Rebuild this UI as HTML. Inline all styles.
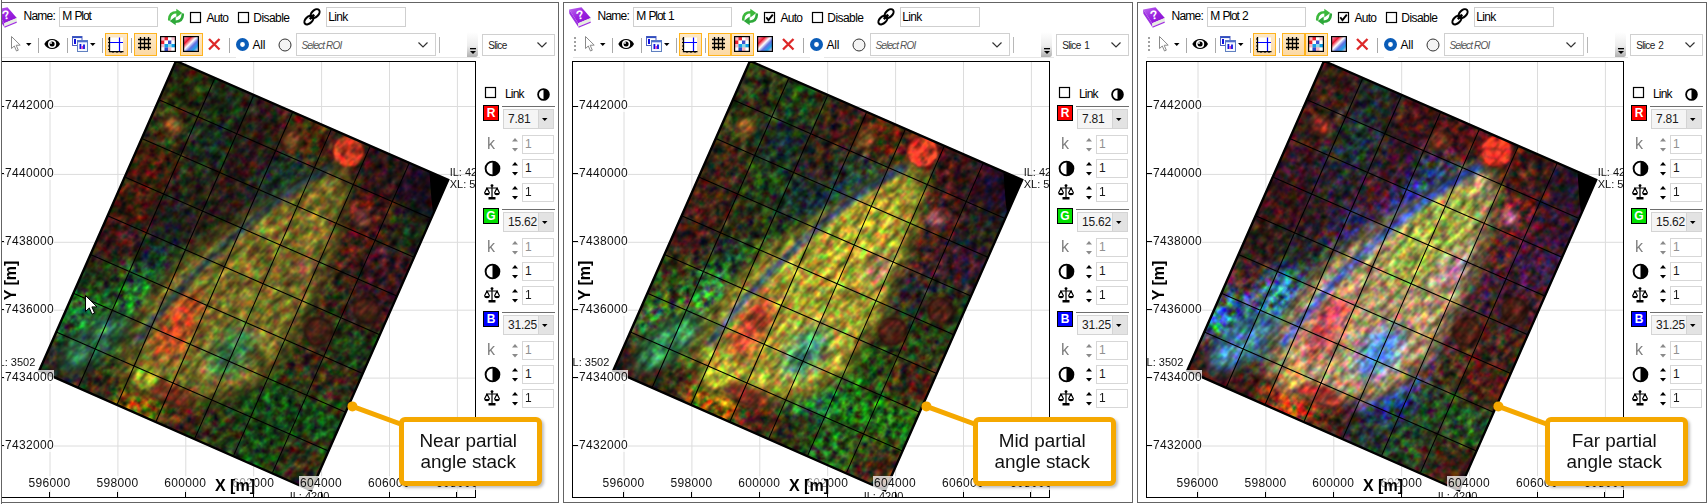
<!DOCTYPE html><html><head><meta charset="utf-8"><style>
html,body{margin:0;padding:0;background:#fff;}
body{width:1707px;height:504px;position:relative;overflow:hidden;font-family:"Liberation Sans", sans-serif;}
.t{position:absolute;white-space:nowrap;line-height:14px;font-family:"Liberation Sans", sans-serif;}
.b{position:absolute;}
.s{position:absolute;overflow:visible;}
.clip{position:absolute;overflow:hidden;}
.lab{font-size:12px;line-height:14px;color:#111;background:rgba(255,255,255,0.75);letter-spacing:0.33px;}
.pan{position:absolute;top:0;height:504px;overflow:hidden;}
</style></head><body>
<div class="pan" style="left:1px;width:562px;"><div class="b" style="left:0;top:0;width:1px;height:504px;background:#646464;z-index:5"></div><div class="b" style="left:-12px;top:0;width:570px;height:504px;"><div class="b" style="left:0px;top:2px;width:570px;height:501px;border:1px solid #646464;box-sizing:border-box;background:#fff;"></div><svg class="s" style="left:3px;top:4px;" width="26" height="26" viewBox="0 0 26 26"><defs><linearGradient id="bkg0" x1="0" y1="0" x2="1" y2="1"><stop offset="0" stop-color="#c070f0"/><stop offset="0.5" stop-color="#9a22e0"/><stop offset="1" stop-color="#8a10d0"/></linearGradient></defs>
<path d="M3.1 5.4 L15.5 3.3 L24.8 14 L12.2 19.2 Z" fill="url(#bkg0)"/>
<path d="M3.1 5.4 L12.2 19.2 L12.6 23.6 L3.4 9.8 Z" fill="#9c30e0"/>
<path d="M12.2 19.2 L24.8 14 L24.6 17.6 L12.6 22.4 Z" fill="#e6eee0"/>
<path d="M12.6 22.4 L24.6 17.6 L24.8 18.8 L12.6 23.8 Z" fill="#a030e0"/>
<text x="14" y="15.3" font-family="Liberation Sans" font-weight="bold" font-size="12.5" fill="#fff" text-anchor="middle" transform="rotate(-14 14 11)">?</text></svg><div class="t" style="left:34.5px;top:9px;font-size:12px;color:#000;letter-spacing:-0.75px;">Name:</div><div class="b" style="left:70px;top:7px;width:99px;height:20px;border:1px solid #cfcfcf;box-sizing:border-box;background:#fff;"></div><div class="t" style="left:73.3px;top:9px;font-size:12px;color:#000;letter-spacing:-1.1px;word-spacing:1px;">M Plot</div><svg class="s" style="left:178.5px;top:8.5px;" width="16" height="16" viewBox="0 0 16 16"><path d="M1.2 10.5 C1.4 5.5 4.5 3.2 9 3.3" fill="none" stroke="#3cb83c" stroke-width="2.6" stroke-linecap="round"/>
<path d="M8.3 -0.3 L14.3 4.1 L8.3 8.6 Z" fill="#3cb83c"/>
<path d="M14.8 5.6 C14.6 10.6 11.5 12.8 7 12.7" fill="none" stroke="#2ea83a" stroke-width="2.6" stroke-linecap="round"/>
<path d="M7.7 7.5 L1.7 11.9 L7.7 16.3 Z" fill="#2ea83a"/></svg><svg class="s" style="left:201px;top:12px;" width="11" height="11" viewBox="0 0 11 11"><rect x="0.5" y="0.5" width="10" height="10" fill="#fff" stroke="#000" stroke-width="1.2"/></svg><div class="t" style="left:217.5px;top:10.7px;font-size:12px;color:#000;letter-spacing:-0.75px;">Auto</div><svg class="s" style="left:248.5px;top:12px;" width="11" height="11" viewBox="0 0 11 11"><rect x="0.5" y="0.5" width="10" height="10" fill="#fff" stroke="#000" stroke-width="1.2"/></svg><div class="t" style="left:264.3px;top:10.7px;font-size:12px;color:#000;letter-spacing:-0.55px;">Disable</div><svg class="s" style="left:309px;top:4px;" width="30" height="26" viewBox="0 0 30 26"><g fill="none" stroke="#000" stroke-width="2.1">
<ellipse cx="10.9" cy="16" rx="5.4" ry="3.3" transform="rotate(-45 10.9 16)"/>
<ellipse cx="17.1" cy="9.7" rx="5.4" ry="3.3" transform="rotate(-45 17.1 9.7)"/>
<path d="M11.8 15.1 L16.2 10.6" stroke-width="2.4"/></g></svg><div class="b" style="left:337px;top:7px;width:80px;height:20px;border:1px solid #cfcfcf;box-sizing:border-box;background:#fff;"></div><div class="t" style="left:339.3px;top:9.5px;font-size:12px;color:#000;letter-spacing:-0.7px;">Link</div><div class="b" style="left:11px;top:36.5px;width:2px;height:2px;background:#a0a0a0;"></div><div class="b" style="left:11px;top:40.5px;width:2px;height:2px;background:#a0a0a0;"></div><div class="b" style="left:11px;top:44.5px;width:2px;height:2px;background:#a0a0a0;"></div><div class="b" style="left:11px;top:48.5px;width:2px;height:2px;background:#a0a0a0;"></div><svg class="s" style="left:21.5px;top:35.5px;" width="10" height="16" viewBox="0 0 10 16"><path d="M0.5 0.5 L0.5 12.5 L3.3 10 L5.5 15 L7.3 14.2 L5.2 9.3 L9.2 9.1 Z" fill="#fff" stroke="#8a8a8a" stroke-width="1"/></svg><svg class="s" style="left:36.5px;top:43px;" width="6" height="4" viewBox="0 0 6 4"><path d="M0 0 L5.5 0 L2.75 3 Z" fill="#000"/></svg><div class="b" style="left:49px;top:37.5px;width:1px;height:15px;background:#a8a8a8;"></div><div class="b" style="left:78px;top:37.5px;width:1px;height:15px;background:#a8a8a8;"></div><div class="b" style="left:113px;top:37.5px;width:1px;height:15px;background:#a8a8a8;"></div><div class="b" style="left:142px;top:37.5px;width:1px;height:15px;background:#a8a8a8;"></div><div class="b" style="left:240px;top:37.5px;width:1px;height:15px;background:#a8a8a8;"></div><svg class="s" style="left:54.5px;top:38px;" width="17" height="12" viewBox="0 0 17 12"><path d="M0.3 6 C3.5 -0.8 12.8 -0.8 16 6 C12.8 12.8 3.5 12.8 0.3 6 Z" fill="#000"/>
<circle cx="8.1" cy="6" r="4.1" fill="#fff"/><circle cx="8.1" cy="6" r="2.5" fill="#000"/><circle cx="7" cy="5" r="0.9" fill="#fff"/></svg><svg class="s" style="left:82.5px;top:36px;" width="16" height="16" viewBox="0 0 16 16"><rect x="0.5" y="0.5" width="9.5" height="9" fill="#fff" stroke="#5060c0"/>
<rect x="0.5" y="0.5" width="9.5" height="1.6" fill="#3050c0"/>
<rect x="2" y="3" width="2" height="5" fill="#1010e0"/>
<rect x="5.5" y="4.5" width="10" height="11" fill="#f4f8ff" stroke="#6080c0"/>
<rect x="5.5" y="4.5" width="10" height="1.8" fill="#5070d0"/>
<rect x="7.5" y="8" width="1.8" height="5" fill="#1010e0"/><rect x="9.3" y="10" width="1.8" height="3" fill="#e040c0"/><rect x="11.1" y="8.5" width="1.8" height="4.5" fill="#1010e0"/></svg><svg class="s" style="left:101px;top:43px;" width="6" height="4" viewBox="0 0 6 4"><path d="M0 0 L5.5 0 L2.75 3 Z" fill="#000"/></svg><div class="b" style="left:116px;top:33px;width:23px;height:23px;background:linear-gradient(#fde9c8,#fcd9a4);border:1px solid #ffb41e;box-sizing:border-box;"></div><div class="b" style="left:145px;top:33px;width:23px;height:23px;background:linear-gradient(#fde9c8,#fcd9a4);border:1px solid #ffb41e;box-sizing:border-box;"></div><div class="b" style="left:191px;top:33px;width:23px;height:23px;background:linear-gradient(#fde9c8,#fcd9a4);border:1px solid #ffb41e;box-sizing:border-box;"></div><svg class="s" style="left:119px;top:36.5px;" width="16" height="16" viewBox="0 0 16 16"><rect x="1.5" y="0.5" width="13.5" height="14" fill="#fff"/>
<path d="M1.5 0 L1.5 14.7 L15.5 14.7" fill="none" stroke="#000" stroke-width="1.3"/>
<path d="M0 2 h1.5 M0 5.5 h1.5 M0 9 h1.5 M0 12.5 h1.5 M5 14.7 v1.3 M9 14.7 v1.3 M13 14.7 v1.3" stroke="#000" stroke-width="1"/>
<path d="M11.5 0.5 V14 M2 5.5 H15" stroke="#0000ff" stroke-width="1.2"/></svg><svg class="s" style="left:149px;top:37px;" width="13" height="13" viewBox="0 0 13 13"><path d="M2.5 0 V13 M6.5 0 V13 M10.5 0 V13 M0 2.5 H13 M0 6.5 H13 M0 10.5 H13" stroke="#000" stroke-width="1.3"/></svg><svg class="s" style="left:171px;top:36px;" width="16" height="16" viewBox="0 0 16 16"><rect x="1.0" y="1.0" width="3.6" height="3.6" fill="#f8b8c8"/><rect x="4.5" y="1.0" width="3.6" height="3.6" fill="#e82030"/><rect x="8.0" y="1.0" width="3.6" height="3.6" fill="#ffffff"/><rect x="11.5" y="1.0" width="3.6" height="3.6" fill="#f8c0d0"/><rect x="1.0" y="4.5" width="3.6" height="3.6" fill="#e82030"/><rect x="4.5" y="4.5" width="3.6" height="3.6" fill="#ffffff"/><rect x="8.0" y="4.5" width="3.6" height="3.6" fill="#4050d0"/><rect x="11.5" y="4.5" width="3.6" height="3.6" fill="#ffffff"/><rect x="1.0" y="8.0" width="3.6" height="3.6" fill="#f8b8c8"/><rect x="4.5" y="8.0" width="3.6" height="3.6" fill="#10a0e8"/><rect x="8.0" y="8.0" width="3.6" height="3.6" fill="#90d8e8"/><rect x="11.5" y="8.0" width="3.6" height="3.6" fill="#10a0e8"/><rect x="1.0" y="11.5" width="3.6" height="3.6" fill="#ffffff"/><rect x="4.5" y="11.5" width="3.6" height="3.6" fill="#3048c8"/><rect x="8.0" y="11.5" width="3.6" height="3.6" fill="#f8b8c8"/><rect x="11.5" y="11.5" width="3.6" height="3.6" fill="#ffffff"/><rect x="0.6" y="0.6" width="14.8" height="14.8" fill="none" stroke="#000" stroke-width="1.2"/></svg><svg class="s" style="left:194px;top:36px;" width="16" height="16" viewBox="0 0 16 16"><defs><linearGradient id="gi0" x1="0" y1="0" x2="1" y2="1">
<stop offset="0" stop-color="#ff9cc0"/><stop offset="0.25" stop-color="#e81830"/><stop offset="0.45" stop-color="#ffffff"/><stop offset="0.62" stop-color="#6070e0"/><stop offset="0.8" stop-color="#20a0e8"/><stop offset="1" stop-color="#ffd0e0"/></linearGradient></defs>
<rect x="1" y="1" width="14" height="14" fill="url(#gi0)"/>
<rect x="0.6" y="0.6" width="14.8" height="14.8" fill="none" stroke="#000" stroke-width="1.2"/></svg><svg class="s" style="left:218.5px;top:37.5px;" width="13" height="13" viewBox="0 0 13 13"><path d="M1 1 L11.5 11.5 M11.5 1 L1 11.5" stroke="#dd2828" stroke-width="2.3"/></svg><svg class="s" style="left:246.5px;top:37.5px;" width="13" height="13" viewBox="0 0 13 13"><circle cx="6.5" cy="6.5" r="4.45" fill="#fff" stroke="#0a5cb8" stroke-width="4.1"/></svg><div class="t" style="left:263.5px;top:38px;font-size:12px;color:#000;letter-spacing:-0.2px;">All</div><svg class="s" style="left:288.5px;top:37.5px;" width="14" height="14" viewBox="0 0 14 14"><circle cx="7" cy="7" r="6" fill="#f4f4f4" stroke="#333" stroke-width="1"/></svg><div class="b" style="left:307px;top:33px;width:140px;height:23px;border:1px solid #d0d0d0;box-sizing:border-box;background:#fff;"></div><div class="t" style="left:312.5px;top:38.5px;font-size:10px;color:#555;font-style:italic;letter-spacing:-0.85px;">Select ROI</div><svg class="s" style="left:429px;top:41.5px;" width="10" height="6" viewBox="0 0 10 6"><path d="M0.5 0.5 L5 5 L9.5 0.5" fill="none" stroke="#333" stroke-width="1.2"/></svg><div class="b" style="left:450px;top:37px;width:1px;height:16px;background:#b8b8b8;"></div><svg class="s" style="left:477.5px;top:32px;" width="11" height="25" viewBox="0 0 11 25"><defs><linearGradient id="ovg0" x1="0" y1="0" x2="0" y2="1"><stop offset="0" stop-color="#ffffff"/><stop offset="0.55" stop-color="#ededed"/><stop offset="1" stop-color="#b0b0b0"/></linearGradient></defs>
<path d="M0 0 H7 Q11 0 11 4 V22 Q11 25 8.5 25 H0 Z" fill="url(#ovg0)"/>
<rect x="3" y="16" width="6" height="1.3" fill="#000"/><path d="M3 19 H9 L6 22 Z" fill="#000"/></svg><div class="b" style="left:493px;top:33.5px;width:73px;height:22.5px;border:1px solid #d0d0d0;box-sizing:border-box;background:#fff;"></div><div class="t" style="left:499.2px;top:38.5px;font-size:10px;color:#222;letter-spacing:-0.65px;word-spacing:1.5px;">Slice</div><svg class="s" style="left:548px;top:41.5px;" width="10" height="6" viewBox="0 0 10 6"><path d="M0.5 0.5 L5 5 L9.5 0.5" fill="none" stroke="#333" stroke-width="1.2"/></svg><div class="b" style="left:10px;top:57px;width:237px;height:1px;background:#e6e6e6;"></div><div class="b" style="left:261px;top:57px;width:230px;height:1px;background:#e6e6e6;"></div><svg class="s" style="left:9.5px;top:61.5px;overflow:hidden;" width="477.0" height="436.0" viewBox="0 0 477.0 436.0"><line x1="51.0" y1="0" x2="51.0" y2="436.0" stroke="#dcdcdc" stroke-width="1"/><line x1="118.89999999999998" y1="0" x2="118.89999999999998" y2="436.0" stroke="#dcdcdc" stroke-width="1"/><line x1="186.79999999999995" y1="0" x2="186.79999999999995" y2="436.0" stroke="#dcdcdc" stroke-width="1"/><line x1="254.70000000000005" y1="0" x2="254.70000000000005" y2="436.0" stroke="#dcdcdc" stroke-width="1"/><line x1="322.6" y1="0" x2="322.6" y2="436.0" stroke="#dcdcdc" stroke-width="1"/><line x1="390.5" y1="0" x2="390.5" y2="436.0" stroke="#dcdcdc" stroke-width="1"/><line x1="458.4000000000001" y1="0" x2="458.4000000000001" y2="436.0" stroke="#dcdcdc" stroke-width="1"/><line x1="0" y1="44.5" x2="477.0" y2="44.5" stroke="#dcdcdc" stroke-width="1"/><line x1="0" y1="112.4" x2="477.0" y2="112.4" stroke="#dcdcdc" stroke-width="1"/><line x1="0" y1="180.3" x2="477.0" y2="180.3" stroke="#dcdcdc" stroke-width="1"/><line x1="0" y1="248.20000000000005" x2="477.0" y2="248.20000000000005" stroke="#dcdcdc" stroke-width="1"/><line x1="0" y1="316.1" x2="477.0" y2="316.1" stroke="#dcdcdc" stroke-width="1"/><line x1="0" y1="384.0" x2="477.0" y2="384.0" stroke="#dcdcdc" stroke-width="1"/><g transform="translate(-572.5,-61.5)"><defs><clipPath id="cp0"><polygon points="749.5,60.5 1021.7,179.4 884.6,490.0 612.7,370.2"/></clipPath><filter id="bl0" x="500" y="0" width="600" height="560" filterUnits="userSpaceOnUse"><feGaussianBlur stdDeviation="10"/></filter><filter id="fb0" x="500" y="0" width="600" height="560" filterUnits="userSpaceOnUse"><feGaussianBlur stdDeviation="6.5"/></filter><filter id="fs0" x="500" y="0" width="600" height="560" filterUnits="userSpaceOnUse"><feGaussianBlur stdDeviation="2.5"/></filter><filter id="fr0" x="500" y="0" width="600" height="560" filterUnits="userSpaceOnUse"><feGaussianBlur stdDeviation="1.2"/></filter><filter id="tx0" x="490" y="-50" width="660" height="660" filterUnits="userSpaceOnUse" color-interpolation-filters="sRGB"><feTurbulence type="fractalNoise" baseFrequency="0.05 0.16" numOctaves="2" seed="3" result="n"/><feColorMatrix in="n" type="matrix" values="1 0 0 0 0  1 0 0 0 0  1 0 0 0 0  0 0 0 0 1" result="nl"/><feComposite in="SourceGraphic" in2="nl" operator="arithmetic" k1="1.35" k2="0.32499999999999996" k3="0" k4="0"/></filter><filter id="tc0" x="500" y="0" width="600" height="560" filterUnits="userSpaceOnUse" color-interpolation-filters="sRGB"><feTurbulence type="fractalNoise" baseFrequency="0.13" numOctaves="3" seed="11" result="m"/><feColorMatrix in="m" type="matrix" values="1 0 0 0 0  0 1 0 0 0  0 0 1 0 0  0 0 0 0 1" result="mc"/><feComposite in="SourceGraphic" in2="mc" operator="arithmetic" k1="3.0" k2="-0.5" k3="0" k4="0"/></filter><filter id="tw0" x="500" y="0" width="600" height="560" filterUnits="userSpaceOnUse" color-interpolation-filters="sRGB"><feTurbulence type="fractalNoise" baseFrequency="0.15" numOctaves="2" seed="5" result="m"/><feColorMatrix in="m" type="matrix" values="1 0 0 0 0  0 1 0 0 0  0 0 1 0 0  0 0 0 0 1" result="mc"/><feComposite in="SourceGraphic" in2="mc" operator="arithmetic" k1="1.3" k2="0.35" k3="0" k4="0"/></filter></defs><g clip-path="url(#cp0)"><g transform="rotate(-47 820 280)"><g filter="url(#tx0)"><g transform="rotate(47 820 280)"><g filter="url(#tc0)"><g filter="url(#bl0)"><polygon points="727.7,4.8 766.6,21.8 749.5,60.5 710.6,43.5" fill="rgb(37, 43, 15)" stroke="rgb(37, 43, 15)" stroke-width="1"/><polygon points="766.6,21.8 805.5,38.8 788.4,77.5 749.5,60.5" fill="rgb(37, 43, 15)" stroke="rgb(37, 43, 15)" stroke-width="1"/><polygon points="805.5,38.8 844.4,55.8 827.3,94.5 788.4,77.5" fill="rgb(31, 43, 20)" stroke="rgb(31, 43, 20)" stroke-width="1"/><polygon points="844.4,55.8 883.3,72.7 866.2,111.5 827.3,94.5" fill="rgb(44, 26, 21)" stroke="rgb(44, 26, 21)" stroke-width="1"/><polygon points="883.3,72.7 922.1,89.7 905.0,128.4 866.2,111.5" fill="rgb(67, 41, 14)" stroke="rgb(67, 41, 14)" stroke-width="1"/><polygon points="922.1,89.7 961.0,106.7 943.9,145.4 905.0,128.4" fill="rgb(61, 30, 19)" stroke="rgb(61, 30, 19)" stroke-width="1"/><polygon points="961.0,106.7 999.9,123.7 982.8,162.4 943.9,145.4" fill="rgb(44, 21, 21)" stroke="rgb(44, 21, 21)" stroke-width="1"/><polygon points="999.9,123.7 1038.8,140.7 1021.7,179.4 982.8,162.4" fill="rgb(28, 17, 28)" stroke="rgb(28, 17, 28)" stroke-width="1"/><polygon points="1038.8,140.7 1077.7,157.7 1060.6,196.4 1021.7,179.4" fill="rgb(28, 17, 28)" stroke="rgb(28, 17, 28)" stroke-width="1"/><polygon points="710.6,43.5 749.5,60.5 732.4,99.2 693.5,82.2" fill="rgb(37, 43, 15)" stroke="rgb(37, 43, 15)" stroke-width="1"/><polygon points="749.5,60.5 788.4,77.5 771.3,116.2 732.4,99.2" fill="rgb(37, 43, 15)" stroke="rgb(37, 43, 15)" stroke-width="1"/><polygon points="788.4,77.5 827.3,94.5 810.2,133.2 771.3,116.2" fill="rgb(31, 43, 20)" stroke="rgb(31, 43, 20)" stroke-width="1"/><polygon points="827.3,94.5 866.2,111.5 849.1,150.2 810.2,133.2" fill="rgb(44, 26, 21)" stroke="rgb(44, 26, 21)" stroke-width="1"/><polygon points="866.2,111.5 905.0,128.4 887.9,167.2 849.1,150.2" fill="rgb(67, 41, 14)" stroke="rgb(67, 41, 14)" stroke-width="1"/><polygon points="905.0,128.4 943.9,145.4 926.8,184.1 887.9,167.2" fill="rgb(61, 30, 19)" stroke="rgb(61, 30, 19)" stroke-width="1"/><polygon points="943.9,145.4 982.8,162.4 965.7,201.1 926.8,184.1" fill="rgb(44, 21, 21)" stroke="rgb(44, 21, 21)" stroke-width="1"/><polygon points="982.8,162.4 1021.7,179.4 1004.6,218.1 965.7,201.1" fill="rgb(28, 17, 28)" stroke="rgb(28, 17, 28)" stroke-width="1"/><polygon points="1021.7,179.4 1060.6,196.4 1043.5,235.1 1004.6,218.1" fill="rgb(28, 17, 28)" stroke="rgb(28, 17, 28)" stroke-width="1"/><polygon points="693.5,82.2 732.4,99.2 715.3,137.9 676.4,120.9" fill="rgb(53, 53, 18)" stroke="rgb(53, 53, 18)" stroke-width="1"/><polygon points="732.4,99.2 771.3,116.2 754.2,154.9 715.3,137.9" fill="rgb(53, 53, 18)" stroke="rgb(53, 53, 18)" stroke-width="1"/><polygon points="771.3,116.2 810.2,133.2 793.1,171.9 754.2,154.9" fill="rgb(20, 43, 31)" stroke="rgb(20, 43, 31)" stroke-width="1"/><polygon points="810.2,133.2 849.1,150.2 832.0,188.9 793.1,171.9" fill="rgb(44, 21, 21)" stroke="rgb(44, 21, 21)" stroke-width="1"/><polygon points="849.1,150.2 887.9,167.2 870.8,205.9 832.0,188.9" fill="rgb(19, 54, 41)" stroke="rgb(19, 54, 41)" stroke-width="1"/><polygon points="887.9,167.2 926.8,184.1 909.7,222.9 870.8,205.9" fill="rgb(40, 67, 18)" stroke="rgb(40, 67, 18)" stroke-width="1"/><polygon points="926.8,184.1 965.7,201.1 948.6,239.8 909.7,222.9" fill="rgb(83, 19, 19)" stroke="rgb(83, 19, 19)" stroke-width="1"/><polygon points="965.7,201.1 1004.6,218.1 987.5,256.8 948.6,239.8" fill="rgb(31, 37, 21)" stroke="rgb(31, 37, 21)" stroke-width="1"/><polygon points="1004.6,218.1 1043.5,235.1 1026.4,273.8 987.5,256.8" fill="rgb(31, 37, 21)" stroke="rgb(31, 37, 21)" stroke-width="1"/><polygon points="676.4,120.9 715.3,137.9 698.2,176.6 659.3,159.7" fill="rgb(69, 30, 14)" stroke="rgb(69, 30, 14)" stroke-width="1"/><polygon points="715.3,137.9 754.2,154.9 737.1,193.6 698.2,176.6" fill="rgb(69, 30, 14)" stroke="rgb(69, 30, 14)" stroke-width="1"/><polygon points="754.2,154.9 793.1,171.9 776.0,210.6 737.1,193.6" fill="rgb(37, 37, 20)" stroke="rgb(37, 37, 20)" stroke-width="1"/><polygon points="793.1,171.9 832.0,188.9 814.9,227.6 776.0,210.6" fill="rgb(44, 26, 21)" stroke="rgb(44, 26, 21)" stroke-width="1"/><polygon points="832.0,188.9 870.8,205.9 853.7,244.6 814.9,227.6" fill="rgb(18, 53, 53)" stroke="rgb(18, 53, 53)" stroke-width="1"/><polygon points="870.8,205.9 909.7,222.9 892.6,261.6 853.7,244.6" fill="rgb(89, 104, 13)" stroke="rgb(89, 104, 13)" stroke-width="1"/><polygon points="909.7,222.9 948.6,239.8 931.5,278.6 892.6,261.6" fill="rgb(68, 29, 19)" stroke="rgb(68, 29, 19)" stroke-width="1"/><polygon points="948.6,239.8 987.5,256.8 970.4,295.5 931.5,278.6" fill="rgb(55, 19, 30)" stroke="rgb(55, 19, 30)" stroke-width="1"/><polygon points="987.5,256.8 1026.4,273.8 1009.3,312.5 970.4,295.5" fill="rgb(55, 19, 30)" stroke="rgb(55, 19, 30)" stroke-width="1"/><polygon points="659.3,159.7 698.2,176.6 681.1,215.3 642.2,198.4" fill="rgb(62, 30, 15)" stroke="rgb(62, 30, 15)" stroke-width="1"/><polygon points="698.2,176.6 737.1,193.6 720.0,232.3 681.1,215.3" fill="rgb(62, 30, 15)" stroke="rgb(62, 30, 15)" stroke-width="1"/><polygon points="737.1,193.6 776.0,210.6 758.9,249.3 720.0,232.3" fill="rgb(31, 31, 31)" stroke="rgb(31, 31, 31)" stroke-width="1"/><polygon points="776.0,210.6 814.9,227.6 797.8,266.3 758.9,249.3" fill="rgb(43, 36, 20)" stroke="rgb(43, 36, 20)" stroke-width="1"/><polygon points="814.9,227.6 853.7,244.6 836.6,283.3 797.8,266.3" fill="rgb(103, 111, 12)" stroke="rgb(103, 111, 12)" stroke-width="1"/><polygon points="853.7,244.6 892.6,261.6 875.5,300.3 836.6,283.3" fill="rgb(103, 103, 12)" stroke="rgb(103, 103, 12)" stroke-width="1"/><polygon points="892.6,261.6 931.5,278.6 914.4,317.3 875.5,300.3" fill="rgb(48, 42, 19)" stroke="rgb(48, 42, 19)" stroke-width="1"/><polygon points="931.5,278.6 970.4,295.5 953.3,334.2 914.4,317.3" fill="rgb(55, 24, 30)" stroke="rgb(55, 24, 30)" stroke-width="1"/><polygon points="970.4,295.5 1009.3,312.5 992.2,351.2 953.3,334.2" fill="rgb(55, 24, 30)" stroke="rgb(55, 24, 30)" stroke-width="1"/><polygon points="642.2,198.4 681.1,215.3 664.0,254.1 625.1,237.1" fill="rgb(56, 25, 20)" stroke="rgb(56, 25, 20)" stroke-width="1"/><polygon points="681.1,215.3 720.0,232.3 702.9,271.0 664.0,254.1" fill="rgb(56, 25, 20)" stroke="rgb(56, 25, 20)" stroke-width="1"/><polygon points="720.0,232.3 758.9,249.3 741.8,288.0 702.9,271.0" fill="rgb(19, 54, 41)" stroke="rgb(19, 54, 41)" stroke-width="1"/><polygon points="758.9,249.3 797.8,266.3 780.7,305.0 741.8,288.0" fill="rgb(76, 91, 14)" stroke="rgb(76, 91, 14)" stroke-width="1"/><polygon points="797.8,266.3 836.6,283.3 819.5,322.0 780.7,305.0" fill="rgb(118, 102, 11)" stroke="rgb(118, 102, 11)" stroke-width="1"/><polygon points="836.6,283.3 875.5,300.3 858.4,339.0 819.5,322.0" fill="rgb(91, 76, 14)" stroke="rgb(91, 76, 14)" stroke-width="1"/><polygon points="875.5,300.3 914.4,317.3 897.3,356.0 858.4,339.0" fill="rgb(54, 47, 18)" stroke="rgb(54, 47, 18)" stroke-width="1"/><polygon points="914.4,317.3 953.3,334.2 936.2,373.0 897.3,356.0" fill="rgb(30, 55, 19)" stroke="rgb(30, 55, 19)" stroke-width="1"/><polygon points="953.3,334.2 992.2,351.2 975.1,389.9 936.2,373.0" fill="rgb(30, 55, 19)" stroke="rgb(30, 55, 19)" stroke-width="1"/><polygon points="625.1,237.1 664.0,254.1 646.9,292.8 608.0,275.8" fill="rgb(35, 54, 21)" stroke="rgb(35, 54, 21)" stroke-width="1"/><polygon points="664.0,254.1 702.9,271.0 685.8,309.8 646.9,292.8" fill="rgb(35, 54, 21)" stroke="rgb(35, 54, 21)" stroke-width="1"/><polygon points="702.9,271.0 741.8,288.0 724.7,326.7 685.8,309.8" fill="rgb(34, 121, 46)" stroke="rgb(34, 121, 46)" stroke-width="1"/><polygon points="741.8,288.0 780.7,305.0 763.6,343.7 724.7,326.7" fill="rgb(139, 53, 13)" stroke="rgb(139, 53, 13)" stroke-width="1"/><polygon points="780.7,305.0 819.5,322.0 802.4,360.7 763.6,343.7" fill="rgb(129, 73, 12)" stroke="rgb(129, 73, 12)" stroke-width="1"/><polygon points="819.5,322.0 858.4,339.0 841.3,377.7 802.4,360.7" fill="rgb(60, 122, 18)" stroke="rgb(60, 122, 18)" stroke-width="1"/><polygon points="858.4,339.0 897.3,356.0 880.2,394.7 841.3,377.7" fill="rgb(54, 41, 19)" stroke="rgb(54, 41, 19)" stroke-width="1"/><polygon points="897.3,356.0 936.2,373.0 919.1,411.7 880.2,394.7" fill="rgb(54, 41, 19)" stroke="rgb(54, 41, 19)" stroke-width="1"/><polygon points="936.2,373.0 975.1,389.9 958.0,428.7 919.1,411.7" fill="rgb(54, 41, 19)" stroke="rgb(54, 41, 19)" stroke-width="1"/><polygon points="608.0,275.8 646.9,292.8 629.8,331.5 590.9,314.5" fill="rgb(34, 113, 47)" stroke="rgb(34, 113, 47)" stroke-width="1"/><polygon points="646.9,292.8 685.8,309.8 668.7,348.5 629.8,331.5" fill="rgb(34, 113, 47)" stroke="rgb(34, 113, 47)" stroke-width="1"/><polygon points="685.8,309.8 724.7,326.7 707.6,365.5 668.7,348.5" fill="rgb(58, 120, 33)" stroke="rgb(58, 120, 33)" stroke-width="1"/><polygon points="724.7,326.7 763.6,343.7 746.5,382.4 707.6,365.5" fill="rgb(167, 98, 9)" stroke="rgb(167, 98, 9)" stroke-width="1"/><polygon points="763.6,343.7 802.4,360.7 785.3,399.4 746.5,382.4" fill="rgb(70, 152, 20)" stroke="rgb(70, 152, 20)" stroke-width="1"/><polygon points="802.4,360.7 841.3,377.7 824.2,416.4 785.3,399.4" fill="rgb(24, 69, 19)" stroke="rgb(24, 69, 19)" stroke-width="1"/><polygon points="841.3,377.7 880.2,394.7 863.1,433.4 824.2,416.4" fill="rgb(24, 69, 19)" stroke="rgb(24, 69, 19)" stroke-width="1"/><polygon points="880.2,394.7 919.1,411.7 902.0,450.4 863.1,433.4" fill="rgb(24, 69, 19)" stroke="rgb(24, 69, 19)" stroke-width="1"/><polygon points="919.1,411.7 958.0,428.7 940.9,467.4 902.0,450.4" fill="rgb(24, 69, 19)" stroke="rgb(24, 69, 19)" stroke-width="1"/><polygon points="590.9,314.5 629.8,331.5 612.7,370.2 573.8,353.2" fill="rgb(42, 36, 30)" stroke="rgb(42, 36, 30)" stroke-width="1"/><polygon points="629.8,331.5 668.7,348.5 651.6,387.2 612.7,370.2" fill="rgb(42, 36, 30)" stroke="rgb(42, 36, 30)" stroke-width="1"/><polygon points="668.7,348.5 707.6,365.5 690.5,404.2 651.6,387.2" fill="rgb(48, 42, 19)" stroke="rgb(48, 42, 19)" stroke-width="1"/><polygon points="707.6,365.5 746.5,382.4 729.4,421.2 690.5,404.2" fill="rgb(126, 101, 11)" stroke="rgb(126, 101, 11)" stroke-width="1"/><polygon points="746.5,382.4 785.3,399.4 768.2,438.1 729.4,421.2" fill="rgb(67, 40, 18)" stroke="rgb(67, 40, 18)" stroke-width="1"/><polygon points="785.3,399.4 824.2,416.4 807.1,455.1 768.2,438.1" fill="rgb(42, 48, 19)" stroke="rgb(42, 48, 19)" stroke-width="1"/><polygon points="824.2,416.4 863.1,433.4 846.0,472.1 807.1,455.1" fill="rgb(24, 69, 19)" stroke="rgb(24, 69, 19)" stroke-width="1"/><polygon points="863.1,433.4 902.0,450.4 884.9,489.1 846.0,472.1" fill="rgb(54, 41, 19)" stroke="rgb(54, 41, 19)" stroke-width="1"/><polygon points="902.0,450.4 940.9,467.4 923.8,506.1 884.9,489.1" fill="rgb(54, 41, 19)" stroke="rgb(54, 41, 19)" stroke-width="1"/><polygon points="573.8,353.2 612.7,370.2 595.6,408.9 556.7,391.9" fill="rgb(42, 36, 30)" stroke="rgb(42, 36, 30)" stroke-width="1"/><polygon points="612.7,370.2 651.6,387.2 634.5,425.9 595.6,408.9" fill="rgb(42, 36, 30)" stroke="rgb(42, 36, 30)" stroke-width="1"/><polygon points="651.6,387.2 690.5,404.2 673.4,442.9 634.5,425.9" fill="rgb(48, 42, 19)" stroke="rgb(48, 42, 19)" stroke-width="1"/><polygon points="690.5,404.2 729.4,421.2 712.3,459.9 673.4,442.9" fill="rgb(126, 101, 11)" stroke="rgb(126, 101, 11)" stroke-width="1"/><polygon points="729.4,421.2 768.2,438.1 751.1,476.9 712.3,459.9" fill="rgb(67, 40, 18)" stroke="rgb(67, 40, 18)" stroke-width="1"/><polygon points="768.2,438.1 807.1,455.1 790.0,493.8 751.1,476.9" fill="rgb(42, 48, 19)" stroke="rgb(42, 48, 19)" stroke-width="1"/><polygon points="807.1,455.1 846.0,472.1 828.9,510.8 790.0,493.8" fill="rgb(24, 69, 19)" stroke="rgb(24, 69, 19)" stroke-width="1"/><polygon points="846.0,472.1 884.9,489.1 867.8,527.8 828.9,510.8" fill="rgb(54, 41, 19)" stroke="rgb(54, 41, 19)" stroke-width="1"/><polygon points="884.9,489.1 923.8,506.1 906.7,544.8 867.8,527.8" fill="rgb(54, 41, 19)" stroke="rgb(54, 41, 19)" stroke-width="1"/></g></g><g filter="url(#tw0)"><g filter="url(#fb0)"><path d="M909.1 162.9 C924.0 168.6 922.8 197.2 914.5 222.8 C903.8 264.5 874.7 339.8 838.4 376.8 C820.5 390.7 804.3 400.4 775.9 399.9 L710.2 391.4 C692.1 380.7 691.1 347.0 704.5 332.5 C712.6 309.8 729.9 277.8 777.9 243.2 C805.9 224.7 844.4 196.1 909.1 164.9 Z" fill="rgb(118, 108, 40)"/><ellipse cx="858" cy="238" rx="62" ry="28" transform="rotate(-47 858 238)" fill="rgb(122, 108, 38)"/><ellipse cx="752" cy="325" rx="38" ry="15" transform="rotate(-60 752 325)" fill="rgb(190, 70, 35)"/><ellipse cx="805" cy="352" rx="30" ry="17" transform="rotate(-50 805 352)" fill="rgb(55, 125, 70)"/><ellipse cx="668" cy="342" rx="40" ry="15" transform="rotate(-40 668 342)" fill="rgb(55, 125, 85)"/><ellipse cx="878" cy="268" rx="18" ry="10" transform="rotate(-50 878 268)" fill="rgb(120, 80, 50)"/></g><g filter="url(#fs0)"><path d="M708 345 Q760 272 842 207 Q880 178 906 166" fill="none" stroke="rgb(35, 60, 80)" stroke-width="6"/><ellipse cx="745" cy="394" rx="24" ry="9" transform="rotate(20 745 394)" fill="rgb(120, 50, 30)"/><circle cx="718" cy="376" r="12" fill="rgb(160, 170, 40)"/><circle cx="935" cy="218" r="8" fill="rgb(140, 70, 60)"/><circle cx="865" cy="139" r="10" fill="rgb(120, 70, 35)"/><circle cx="746" cy="125" r="9" fill="rgb(150, 90, 40)"/><circle cx="892" cy="331" r="14" fill="rgb(70, 35, 25)"/><circle cx="940" cy="310" r="13" fill="rgb(70, 35, 25)"/></g><g filter="url(#fr0)"><circle cx="922" cy="151" r="15.5" fill="rgb(200, 60, 35)"/></g></g></g></g></g></g><path d="M788.4 77.5L651.6 387.2M827.3 94.5L690.5 404.2M866.2 111.5L729.4 421.2M905.0 128.4L768.2 438.1M943.9 145.4L807.1 455.1M982.8 162.4L846.0 472.1M732.4 99.2L1004.6 218.1M715.3 137.9L987.5 256.8M698.2 176.6L970.4 295.5M681.1 215.3L953.3 334.2M664.0 254.1L936.2 373.0M646.9 292.8L919.1 411.7M629.8 331.5L902.0 450.4" stroke="#000" stroke-width="1.1" fill="none"/><polygon points="1003,172.5 1021.7,179.4 1006.5,212 1005,200" fill="#000"/><polygon points="749.5,60.5 1021.7,179.4 884.6,490.0 612.7,370.2" fill="none" stroke="#000" stroke-width="2.4"/></g></svg><div class="clip" style="left:9.5px;top:61.5px;width:477.0px;height:436.0px;"><div class="t" style="left:451.20000000000005px;top:104.5px;font-size:11px;line-height:12px;color:#111;">IL: 4200<br>XL: 5502</div><div class="t" style="left:-7.2000000000000455px;top:294.5px;font-size:11px;line-height:12px;color:#111;width:44px;text-align:right;">IL: 3502</div><div class="t" style="left:291.20000000000005px;top:428.5px;font-size:11px;line-height:12px;color:#111;">IL: 4200</div></div><div class="b" style="left:9px;top:61px;width:1px;height:437px;background:#000;"></div><div class="b" style="left:9px;top:61px;width:478px;height:1.3px;background:#000;"></div><div class="b" style="left:486px;top:61px;width:1.2px;height:437px;background:#000;"></div><div class="b" style="left:9px;top:497px;width:478px;height:1.2px;background:#000;"></div><div class="b" style="left:9.5px;top:105.5px;width:5px;height:1px;background:#000;"></div><div class="b" style="left:9.5px;top:173.4px;width:5px;height:1px;background:#000;"></div><div class="b" style="left:9.5px;top:241.3px;width:5px;height:1px;background:#000;"></div><div class="b" style="left:9.5px;top:309.20000000000005px;width:5px;height:1px;background:#000;"></div><div class="b" style="left:9.5px;top:377.1px;width:5px;height:1px;background:#000;"></div><div class="b" style="left:9.5px;top:445.0px;width:5px;height:1px;background:#000;"></div><div class="b" style="left:60.0px;top:492px;width:1px;height:5px;background:#000;"></div><div class="b" style="left:127.9px;top:492px;width:1px;height:5px;background:#000;"></div><div class="b" style="left:195.8px;top:492px;width:1px;height:5px;background:#000;"></div><div class="b" style="left:263.7px;top:492px;width:1px;height:5px;background:#000;"></div><div class="b" style="left:331.6px;top:492px;width:1px;height:5px;background:#000;"></div><div class="b" style="left:399.5px;top:492px;width:1px;height:5px;background:#000;"></div><div class="b" style="left:467.4px;top:492px;width:1px;height:5px;background:#000;"></div><div class="t lab" style="left:16px;top:98.0px;">7442000</div><div class="t lab" style="left:16px;top:165.9px;">7440000</div><div class="t lab" style="left:16px;top:233.8px;">7438000</div><div class="t lab" style="left:16px;top:301.70000000000005px;">7436000</div><div class="t lab" style="left:16px;top:369.6px;">7434000</div><div class="t lab" style="left:16px;top:437.5px;">7432000</div><div class="t lab" style="left:38.5px;top:476px;width:44px;text-align:center;">596000</div><div class="t lab" style="left:106.4px;top:476px;width:44px;text-align:center;">598000</div><div class="t lab" style="left:174.3px;top:476px;width:44px;text-align:center;">600000</div><div class="t lab" style="left:242.2px;top:476px;width:44px;text-align:center;">602000</div><div class="t lab" style="left:310.1px;top:476px;width:44px;text-align:center;">604000</div><div class="t lab" style="left:378.0px;top:476px;width:44px;text-align:center;">606000</div><div class="t lab" style="left:445.9px;top:476px;width:44px;text-align:center;">608000</div><div class="t" style="left:226px;top:477px;font-size:16px;font-weight:bold;color:#000;background:rgba(255,255,255,0.55);line-height:17px;">X [m]</div><div class="t" style="left:0.5px;top:271.5px;font-size:16px;font-weight:bold;color:#000;line-height:17px;width:40px;text-align:center;transform:rotate(-90deg);">Y [m]</div><svg class="s" style="left:496px;top:87px;" width="11" height="11" viewBox="0 0 11 11"><rect x="0.5" y="0.5" width="10" height="10" fill="#fff" stroke="#000" stroke-width="1.2"/></svg><div class="t" style="left:516px;top:86.5px;font-size:12px;color:#000;letter-spacing:-0.8px;">Link</div><svg class="s" style="left:547.5px;top:87.5px;" width="13" height="13" viewBox="0 0 13 13"><circle cx="6.5" cy="6.5" r="5.4" fill="#fff" stroke="#000" stroke-width="1.8"/><path d="M6.5 1.1 A5.4 5.4 0 0 1 6.5 11.9 Z" fill="#000"/></svg><div class="b" style="left:513px;top:105.5px;width:53px;height:1px;background:#6e6e6e;"></div><div class="b" style="left:494px;top:105px;width:16px;height:16px;background:#ff0000;border:1px solid #000;box-sizing:border-box;"></div><div class="t" style="left:494px;top:106px;width:16px;text-align:center;font-size:12px;font-weight:bold;color:#fff;line-height:14px;">R</div><div class="b" style="left:514px;top:109px;width:51px;height:20px;background:#f5f5f5;border:1px solid #d4d4d4;box-sizing:border-box;"></div><div class="b" style="left:549px;top:110px;width:15px;height:18px;background:#e3e3e3;border-left:1px solid #d4d4d4;box-sizing:border-box;"></div><svg class="s" style="left:553px;top:117.5px;" width="6" height="4" viewBox="0 0 6 4"><path d="M0 0 L5.5 0 L2.75 3 Z" fill="#000"/></svg><div class="t" style="left:519px;top:111px;font-size:12px;color:#1a1a1a;line-height:16px;letter-spacing:-0.2px;">7.81</div><div class="b" style="left:532.5px;top:134.5px;width:32px;height:19px;background:#fff;border:1px solid #d7d7d7;box-sizing:border-box;"></div><div class="t" style="left:536px;top:136.5px;font-size:12px;color:#909090;line-height:15px;">1</div><svg class="s" style="left:522.5px;top:138.0px;" width="6" height="4" viewBox="0 0 6 4"><path d="M0 3.5 L3 0 L6 3.5 Z" fill="#8a8a8a"/></svg><svg class="s" style="left:522.5px;top:147.5px;" width="6" height="4" viewBox="0 0 6 4"><path d="M0 0 L6 0 L3 3.5 Z" fill="#8a8a8a"/></svg><div class="t" style="left:498px;top:134.0px;font-size:16px;color:#808080;line-height:19px;">k</div><div class="b" style="left:532.5px;top:158.5px;width:32px;height:19px;background:#fff;border:1px solid #d7d7d7;box-sizing:border-box;"></div><div class="t" style="left:536px;top:160.5px;font-size:12px;color:#1a1a1a;line-height:15px;">1</div><svg class="s" style="left:522.5px;top:162.0px;" width="6" height="4" viewBox="0 0 6 4"><path d="M0 3.5 L3 0 L6 3.5 Z" fill="#000"/></svg><svg class="s" style="left:522.5px;top:171.5px;" width="6" height="4" viewBox="0 0 6 4"><path d="M0 0 L6 0 L3 3.5 Z" fill="#000"/></svg><svg class="s" style="left:494.5px;top:159.7px;" width="17" height="17" viewBox="0 0 17 17"><circle cx="8.5" cy="8.5" r="6.9" fill="#fff" stroke="#000" stroke-width="1.9"/><path d="M8.5 1.6 A6.9 6.9 0 0 1 8.5 15.4 Z" fill="#000"/></svg><div class="b" style="left:532.5px;top:182.5px;width:32px;height:19px;background:#fff;border:1px solid #d7d7d7;box-sizing:border-box;"></div><div class="t" style="left:536px;top:184.5px;font-size:12px;color:#1a1a1a;line-height:15px;">1</div><svg class="s" style="left:522.5px;top:186.0px;" width="6" height="4" viewBox="0 0 6 4"><path d="M0 3.5 L3 0 L6 3.5 Z" fill="#000"/></svg><svg class="s" style="left:522.5px;top:195.5px;" width="6" height="4" viewBox="0 0 6 4"><path d="M0 0 L6 0 L3 3.5 Z" fill="#000"/></svg><svg class="s" style="left:495px;top:184.0px;" width="16" height="16" viewBox="0 0 16 16"><g stroke="#000" fill="none" stroke-width="1.2">
<path d="M8 1.5 V13 M2 4 H14"/>
<path d="M3 4 L0.5 9 M3 4 L5.5 9 M13 4 L10.5 9 M13 4 L15.5 9"/>
</g>
<path d="M0.3 9 H5.7 A2.7 2.2 0 0 1 0.3 9 Z M10.3 9 H15.7 A2.7 2.2 0 0 1 10.3 9 Z" fill="#000"/>
<rect x="4.5" y="13" width="7" height="2.5" fill="#000"/><circle cx="8" cy="1.6" r="1.4" fill="#000"/></svg><div class="b" style="left:513px;top:208.5px;width:53px;height:1px;background:#6e6e6e;"></div><div class="b" style="left:494px;top:208px;width:16px;height:16px;background:#00e000;border:1px solid #000;box-sizing:border-box;"></div><div class="t" style="left:494px;top:209px;width:16px;text-align:center;font-size:12px;font-weight:bold;color:#fff;line-height:14px;">G</div><div class="b" style="left:514px;top:212px;width:51px;height:20px;background:#f5f5f5;border:1px solid #d4d4d4;box-sizing:border-box;"></div><div class="b" style="left:549px;top:213px;width:15px;height:18px;background:#e3e3e3;border-left:1px solid #d4d4d4;box-sizing:border-box;"></div><svg class="s" style="left:553px;top:220.5px;" width="6" height="4" viewBox="0 0 6 4"><path d="M0 0 L5.5 0 L2.75 3 Z" fill="#000"/></svg><div class="t" style="left:519px;top:214px;font-size:12px;color:#1a1a1a;line-height:16px;letter-spacing:-0.2px;">15.62</div><div class="b" style="left:532.5px;top:237.5px;width:32px;height:19px;background:#fff;border:1px solid #d7d7d7;box-sizing:border-box;"></div><div class="t" style="left:536px;top:239.5px;font-size:12px;color:#909090;line-height:15px;">1</div><svg class="s" style="left:522.5px;top:241.0px;" width="6" height="4" viewBox="0 0 6 4"><path d="M0 3.5 L3 0 L6 3.5 Z" fill="#8a8a8a"/></svg><svg class="s" style="left:522.5px;top:250.5px;" width="6" height="4" viewBox="0 0 6 4"><path d="M0 0 L6 0 L3 3.5 Z" fill="#8a8a8a"/></svg><div class="t" style="left:498px;top:237.0px;font-size:16px;color:#808080;line-height:19px;">k</div><div class="b" style="left:532.5px;top:261.5px;width:32px;height:19px;background:#fff;border:1px solid #d7d7d7;box-sizing:border-box;"></div><div class="t" style="left:536px;top:263.5px;font-size:12px;color:#1a1a1a;line-height:15px;">1</div><svg class="s" style="left:522.5px;top:265.0px;" width="6" height="4" viewBox="0 0 6 4"><path d="M0 3.5 L3 0 L6 3.5 Z" fill="#000"/></svg><svg class="s" style="left:522.5px;top:274.5px;" width="6" height="4" viewBox="0 0 6 4"><path d="M0 0 L6 0 L3 3.5 Z" fill="#000"/></svg><svg class="s" style="left:494.5px;top:262.7px;" width="17" height="17" viewBox="0 0 17 17"><circle cx="8.5" cy="8.5" r="6.9" fill="#fff" stroke="#000" stroke-width="1.9"/><path d="M8.5 1.6 A6.9 6.9 0 0 1 8.5 15.4 Z" fill="#000"/></svg><div class="b" style="left:532.5px;top:285.5px;width:32px;height:19px;background:#fff;border:1px solid #d7d7d7;box-sizing:border-box;"></div><div class="t" style="left:536px;top:287.5px;font-size:12px;color:#1a1a1a;line-height:15px;">1</div><svg class="s" style="left:522.5px;top:289.0px;" width="6" height="4" viewBox="0 0 6 4"><path d="M0 3.5 L3 0 L6 3.5 Z" fill="#000"/></svg><svg class="s" style="left:522.5px;top:298.5px;" width="6" height="4" viewBox="0 0 6 4"><path d="M0 0 L6 0 L3 3.5 Z" fill="#000"/></svg><svg class="s" style="left:495px;top:287.0px;" width="16" height="16" viewBox="0 0 16 16"><g stroke="#000" fill="none" stroke-width="1.2">
<path d="M8 1.5 V13 M2 4 H14"/>
<path d="M3 4 L0.5 9 M3 4 L5.5 9 M13 4 L10.5 9 M13 4 L15.5 9"/>
</g>
<path d="M0.3 9 H5.7 A2.7 2.2 0 0 1 0.3 9 Z M10.3 9 H15.7 A2.7 2.2 0 0 1 10.3 9 Z" fill="#000"/>
<rect x="4.5" y="13" width="7" height="2.5" fill="#000"/><circle cx="8" cy="1.6" r="1.4" fill="#000"/></svg><div class="b" style="left:513px;top:311.5px;width:53px;height:1px;background:#6e6e6e;"></div><div class="b" style="left:494px;top:311px;width:16px;height:16px;background:#0000ff;border:1px solid #000;box-sizing:border-box;"></div><div class="t" style="left:494px;top:312px;width:16px;text-align:center;font-size:12px;font-weight:bold;color:#fff;line-height:14px;">B</div><div class="b" style="left:514px;top:315px;width:51px;height:20px;background:#f5f5f5;border:1px solid #d4d4d4;box-sizing:border-box;"></div><div class="b" style="left:549px;top:316px;width:15px;height:18px;background:#e3e3e3;border-left:1px solid #d4d4d4;box-sizing:border-box;"></div><svg class="s" style="left:553px;top:323.5px;" width="6" height="4" viewBox="0 0 6 4"><path d="M0 0 L5.5 0 L2.75 3 Z" fill="#000"/></svg><div class="t" style="left:519px;top:317px;font-size:12px;color:#1a1a1a;line-height:16px;letter-spacing:-0.2px;">31.25</div><div class="b" style="left:532.5px;top:340.5px;width:32px;height:19px;background:#fff;border:1px solid #d7d7d7;box-sizing:border-box;"></div><div class="t" style="left:536px;top:342.5px;font-size:12px;color:#909090;line-height:15px;">1</div><svg class="s" style="left:522.5px;top:344.0px;" width="6" height="4" viewBox="0 0 6 4"><path d="M0 3.5 L3 0 L6 3.5 Z" fill="#8a8a8a"/></svg><svg class="s" style="left:522.5px;top:353.5px;" width="6" height="4" viewBox="0 0 6 4"><path d="M0 0 L6 0 L3 3.5 Z" fill="#8a8a8a"/></svg><div class="t" style="left:498px;top:340.0px;font-size:16px;color:#808080;line-height:19px;">k</div><div class="b" style="left:532.5px;top:364.5px;width:32px;height:19px;background:#fff;border:1px solid #d7d7d7;box-sizing:border-box;"></div><div class="t" style="left:536px;top:366.5px;font-size:12px;color:#1a1a1a;line-height:15px;">1</div><svg class="s" style="left:522.5px;top:368.0px;" width="6" height="4" viewBox="0 0 6 4"><path d="M0 3.5 L3 0 L6 3.5 Z" fill="#000"/></svg><svg class="s" style="left:522.5px;top:377.5px;" width="6" height="4" viewBox="0 0 6 4"><path d="M0 0 L6 0 L3 3.5 Z" fill="#000"/></svg><svg class="s" style="left:494.5px;top:365.7px;" width="17" height="17" viewBox="0 0 17 17"><circle cx="8.5" cy="8.5" r="6.9" fill="#fff" stroke="#000" stroke-width="1.9"/><path d="M8.5 1.6 A6.9 6.9 0 0 1 8.5 15.4 Z" fill="#000"/></svg><div class="b" style="left:532.5px;top:388.5px;width:32px;height:19px;background:#fff;border:1px solid #d7d7d7;box-sizing:border-box;"></div><div class="t" style="left:536px;top:390.5px;font-size:12px;color:#1a1a1a;line-height:15px;">1</div><svg class="s" style="left:522.5px;top:392.0px;" width="6" height="4" viewBox="0 0 6 4"><path d="M0 3.5 L3 0 L6 3.5 Z" fill="#000"/></svg><svg class="s" style="left:522.5px;top:401.5px;" width="6" height="4" viewBox="0 0 6 4"><path d="M0 0 L6 0 L3 3.5 Z" fill="#000"/></svg><svg class="s" style="left:495px;top:390.0px;" width="16" height="16" viewBox="0 0 16 16"><g stroke="#000" fill="none" stroke-width="1.2">
<path d="M8 1.5 V13 M2 4 H14"/>
<path d="M3 4 L0.5 9 M3 4 L5.5 9 M13 4 L10.5 9 M13 4 L15.5 9"/>
</g>
<path d="M0.3 9 H5.7 A2.7 2.2 0 0 1 0.3 9 Z M10.3 9 H15.7 A2.7 2.2 0 0 1 10.3 9 Z" fill="#000"/>
<rect x="4.5" y="13" width="7" height="2.5" fill="#000"/><circle cx="8" cy="1.6" r="1.4" fill="#000"/></svg><svg class="s" style="left:337px;top:390px;" width="100" height="60" viewBox="0 0 100 60"><line x1="26.399999999999977" y1="16.399999999999977" x2="80" y2="36" stroke="#f5a800" stroke-width="5" stroke-linecap="round"/><circle cx="26.399999999999977" cy="16.399999999999977" r="5" fill="#f5a800"/></svg><div class="b" style="left:410.3px;top:417.3px;width:142.9000000000001px;height:68.69999999999999px;border:5.5px solid #f5a800;border-radius:6px;box-sizing:border-box;background:#fff;box-shadow:2px 2px 3px rgba(0,0,0,0.25);"></div><div class="t" style="left:407.8px;top:430.3px;width:142.9000000000001px;text-align:center;font-size:18.9px;line-height:21px;color:#111;">Near partial<br>angle stack</div></div></div>
<div class="pan" style="left:563px;width:570px;"><div class="b" style="left:0px;top:2px;width:570px;height:501px;border:1px solid #646464;box-sizing:border-box;background:#fff;"></div><svg class="s" style="left:3px;top:4px;" width="26" height="26" viewBox="0 0 26 26"><defs><linearGradient id="bkg1" x1="0" y1="0" x2="1" y2="1"><stop offset="0" stop-color="#c070f0"/><stop offset="0.5" stop-color="#9a22e0"/><stop offset="1" stop-color="#8a10d0"/></linearGradient></defs>
<path d="M3.1 5.4 L15.5 3.3 L24.8 14 L12.2 19.2 Z" fill="url(#bkg1)"/>
<path d="M3.1 5.4 L12.2 19.2 L12.6 23.6 L3.4 9.8 Z" fill="#9c30e0"/>
<path d="M12.2 19.2 L24.8 14 L24.6 17.6 L12.6 22.4 Z" fill="#e6eee0"/>
<path d="M12.6 22.4 L24.6 17.6 L24.8 18.8 L12.6 23.8 Z" fill="#a030e0"/>
<text x="14" y="15.3" font-family="Liberation Sans" font-weight="bold" font-size="12.5" fill="#fff" text-anchor="middle" transform="rotate(-14 14 11)">?</text></svg><div class="t" style="left:34.5px;top:9px;font-size:12px;color:#000;letter-spacing:-0.75px;">Name:</div><div class="b" style="left:70px;top:7px;width:99px;height:20px;border:1px solid #cfcfcf;box-sizing:border-box;background:#fff;"></div><div class="t" style="left:73.3px;top:9px;font-size:12px;color:#000;letter-spacing:-1.1px;word-spacing:1px;">M Plot 1</div><svg class="s" style="left:178.5px;top:8.5px;" width="16" height="16" viewBox="0 0 16 16"><path d="M1.2 10.5 C1.4 5.5 4.5 3.2 9 3.3" fill="none" stroke="#3cb83c" stroke-width="2.6" stroke-linecap="round"/>
<path d="M8.3 -0.3 L14.3 4.1 L8.3 8.6 Z" fill="#3cb83c"/>
<path d="M14.8 5.6 C14.6 10.6 11.5 12.8 7 12.7" fill="none" stroke="#2ea83a" stroke-width="2.6" stroke-linecap="round"/>
<path d="M7.7 7.5 L1.7 11.9 L7.7 16.3 Z" fill="#2ea83a"/></svg><svg class="s" style="left:201px;top:12px;" width="11" height="11" viewBox="0 0 11 11"><rect x="0.5" y="0.5" width="10" height="10" fill="#fff" stroke="#000" stroke-width="1.2"/><path d="M2.3 5.2 L4.5 8.2 L8.8 2.6" fill="none" stroke="#000" stroke-width="1.9"/></svg><div class="t" style="left:217.5px;top:10.7px;font-size:12px;color:#000;letter-spacing:-0.75px;">Auto</div><svg class="s" style="left:248.5px;top:12px;" width="11" height="11" viewBox="0 0 11 11"><rect x="0.5" y="0.5" width="10" height="10" fill="#fff" stroke="#000" stroke-width="1.2"/></svg><div class="t" style="left:264.3px;top:10.7px;font-size:12px;color:#000;letter-spacing:-0.55px;">Disable</div><svg class="s" style="left:309px;top:4px;" width="30" height="26" viewBox="0 0 30 26"><g fill="none" stroke="#000" stroke-width="2.1">
<ellipse cx="10.9" cy="16" rx="5.4" ry="3.3" transform="rotate(-45 10.9 16)"/>
<ellipse cx="17.1" cy="9.7" rx="5.4" ry="3.3" transform="rotate(-45 17.1 9.7)"/>
<path d="M11.8 15.1 L16.2 10.6" stroke-width="2.4"/></g></svg><div class="b" style="left:337px;top:7px;width:80px;height:20px;border:1px solid #cfcfcf;box-sizing:border-box;background:#fff;"></div><div class="t" style="left:339.3px;top:9.5px;font-size:12px;color:#000;letter-spacing:-0.7px;">Link</div><div class="b" style="left:11px;top:36.5px;width:2px;height:2px;background:#a0a0a0;"></div><div class="b" style="left:11px;top:40.5px;width:2px;height:2px;background:#a0a0a0;"></div><div class="b" style="left:11px;top:44.5px;width:2px;height:2px;background:#a0a0a0;"></div><div class="b" style="left:11px;top:48.5px;width:2px;height:2px;background:#a0a0a0;"></div><svg class="s" style="left:21.5px;top:35.5px;" width="10" height="16" viewBox="0 0 10 16"><path d="M0.5 0.5 L0.5 12.5 L3.3 10 L5.5 15 L7.3 14.2 L5.2 9.3 L9.2 9.1 Z" fill="#fff" stroke="#8a8a8a" stroke-width="1"/></svg><svg class="s" style="left:36.5px;top:43px;" width="6" height="4" viewBox="0 0 6 4"><path d="M0 0 L5.5 0 L2.75 3 Z" fill="#000"/></svg><div class="b" style="left:49px;top:37.5px;width:1px;height:15px;background:#a8a8a8;"></div><div class="b" style="left:78px;top:37.5px;width:1px;height:15px;background:#a8a8a8;"></div><div class="b" style="left:113px;top:37.5px;width:1px;height:15px;background:#a8a8a8;"></div><div class="b" style="left:142px;top:37.5px;width:1px;height:15px;background:#a8a8a8;"></div><div class="b" style="left:240px;top:37.5px;width:1px;height:15px;background:#a8a8a8;"></div><svg class="s" style="left:54.5px;top:38px;" width="17" height="12" viewBox="0 0 17 12"><path d="M0.3 6 C3.5 -0.8 12.8 -0.8 16 6 C12.8 12.8 3.5 12.8 0.3 6 Z" fill="#000"/>
<circle cx="8.1" cy="6" r="4.1" fill="#fff"/><circle cx="8.1" cy="6" r="2.5" fill="#000"/><circle cx="7" cy="5" r="0.9" fill="#fff"/></svg><svg class="s" style="left:82.5px;top:36px;" width="16" height="16" viewBox="0 0 16 16"><rect x="0.5" y="0.5" width="9.5" height="9" fill="#fff" stroke="#5060c0"/>
<rect x="0.5" y="0.5" width="9.5" height="1.6" fill="#3050c0"/>
<rect x="2" y="3" width="2" height="5" fill="#1010e0"/>
<rect x="5.5" y="4.5" width="10" height="11" fill="#f4f8ff" stroke="#6080c0"/>
<rect x="5.5" y="4.5" width="10" height="1.8" fill="#5070d0"/>
<rect x="7.5" y="8" width="1.8" height="5" fill="#1010e0"/><rect x="9.3" y="10" width="1.8" height="3" fill="#e040c0"/><rect x="11.1" y="8.5" width="1.8" height="4.5" fill="#1010e0"/></svg><svg class="s" style="left:101px;top:43px;" width="6" height="4" viewBox="0 0 6 4"><path d="M0 0 L5.5 0 L2.75 3 Z" fill="#000"/></svg><div class="b" style="left:116px;top:33px;width:23px;height:23px;background:linear-gradient(#fde9c8,#fcd9a4);border:1px solid #ffb41e;box-sizing:border-box;"></div><div class="b" style="left:145px;top:33px;width:23px;height:23px;background:linear-gradient(#fde9c8,#fcd9a4);border:1px solid #ffb41e;box-sizing:border-box;"></div><div class="b" style="left:168px;top:33px;width:23px;height:23px;background:linear-gradient(#fde9c8,#fcd9a4);border:1px solid #ffb41e;box-sizing:border-box;"></div><svg class="s" style="left:119px;top:36.5px;" width="16" height="16" viewBox="0 0 16 16"><rect x="1.5" y="0.5" width="13.5" height="14" fill="#fff"/>
<path d="M1.5 0 L1.5 14.7 L15.5 14.7" fill="none" stroke="#000" stroke-width="1.3"/>
<path d="M0 2 h1.5 M0 5.5 h1.5 M0 9 h1.5 M0 12.5 h1.5 M5 14.7 v1.3 M9 14.7 v1.3 M13 14.7 v1.3" stroke="#000" stroke-width="1"/>
<path d="M11.5 0.5 V14 M2 5.5 H15" stroke="#0000ff" stroke-width="1.2"/></svg><svg class="s" style="left:149px;top:37px;" width="13" height="13" viewBox="0 0 13 13"><path d="M2.5 0 V13 M6.5 0 V13 M10.5 0 V13 M0 2.5 H13 M0 6.5 H13 M0 10.5 H13" stroke="#000" stroke-width="1.3"/></svg><svg class="s" style="left:171px;top:36px;" width="16" height="16" viewBox="0 0 16 16"><rect x="1.0" y="1.0" width="3.6" height="3.6" fill="#f8b8c8"/><rect x="4.5" y="1.0" width="3.6" height="3.6" fill="#e82030"/><rect x="8.0" y="1.0" width="3.6" height="3.6" fill="#ffffff"/><rect x="11.5" y="1.0" width="3.6" height="3.6" fill="#f8c0d0"/><rect x="1.0" y="4.5" width="3.6" height="3.6" fill="#e82030"/><rect x="4.5" y="4.5" width="3.6" height="3.6" fill="#ffffff"/><rect x="8.0" y="4.5" width="3.6" height="3.6" fill="#4050d0"/><rect x="11.5" y="4.5" width="3.6" height="3.6" fill="#ffffff"/><rect x="1.0" y="8.0" width="3.6" height="3.6" fill="#f8b8c8"/><rect x="4.5" y="8.0" width="3.6" height="3.6" fill="#10a0e8"/><rect x="8.0" y="8.0" width="3.6" height="3.6" fill="#90d8e8"/><rect x="11.5" y="8.0" width="3.6" height="3.6" fill="#10a0e8"/><rect x="1.0" y="11.5" width="3.6" height="3.6" fill="#ffffff"/><rect x="4.5" y="11.5" width="3.6" height="3.6" fill="#3048c8"/><rect x="8.0" y="11.5" width="3.6" height="3.6" fill="#f8b8c8"/><rect x="11.5" y="11.5" width="3.6" height="3.6" fill="#ffffff"/><rect x="0.6" y="0.6" width="14.8" height="14.8" fill="none" stroke="#000" stroke-width="1.2"/></svg><svg class="s" style="left:194px;top:36px;" width="16" height="16" viewBox="0 0 16 16"><defs><linearGradient id="gi1" x1="0" y1="0" x2="1" y2="1">
<stop offset="0" stop-color="#ff9cc0"/><stop offset="0.25" stop-color="#e81830"/><stop offset="0.45" stop-color="#ffffff"/><stop offset="0.62" stop-color="#6070e0"/><stop offset="0.8" stop-color="#20a0e8"/><stop offset="1" stop-color="#ffd0e0"/></linearGradient></defs>
<rect x="1" y="1" width="14" height="14" fill="url(#gi1)"/>
<rect x="0.6" y="0.6" width="14.8" height="14.8" fill="none" stroke="#000" stroke-width="1.2"/></svg><svg class="s" style="left:218.5px;top:37.5px;" width="13" height="13" viewBox="0 0 13 13"><path d="M1 1 L11.5 11.5 M11.5 1 L1 11.5" stroke="#dd2828" stroke-width="2.3"/></svg><svg class="s" style="left:246.5px;top:37.5px;" width="13" height="13" viewBox="0 0 13 13"><circle cx="6.5" cy="6.5" r="4.45" fill="#fff" stroke="#0a5cb8" stroke-width="4.1"/></svg><div class="t" style="left:263.5px;top:38px;font-size:12px;color:#000;letter-spacing:-0.2px;">All</div><svg class="s" style="left:288.5px;top:37.5px;" width="14" height="14" viewBox="0 0 14 14"><circle cx="7" cy="7" r="6" fill="#f4f4f4" stroke="#333" stroke-width="1"/></svg><div class="b" style="left:307px;top:33px;width:140px;height:23px;border:1px solid #d0d0d0;box-sizing:border-box;background:#fff;"></div><div class="t" style="left:312.5px;top:38.5px;font-size:10px;color:#555;font-style:italic;letter-spacing:-0.85px;">Select ROI</div><svg class="s" style="left:429px;top:41.5px;" width="10" height="6" viewBox="0 0 10 6"><path d="M0.5 0.5 L5 5 L9.5 0.5" fill="none" stroke="#333" stroke-width="1.2"/></svg><div class="b" style="left:450px;top:37px;width:1px;height:16px;background:#b8b8b8;"></div><svg class="s" style="left:477.5px;top:32px;" width="11" height="25" viewBox="0 0 11 25"><defs><linearGradient id="ovg1" x1="0" y1="0" x2="0" y2="1"><stop offset="0" stop-color="#ffffff"/><stop offset="0.55" stop-color="#ededed"/><stop offset="1" stop-color="#b0b0b0"/></linearGradient></defs>
<path d="M0 0 H7 Q11 0 11 4 V22 Q11 25 8.5 25 H0 Z" fill="url(#ovg1)"/>
<rect x="3" y="16" width="6" height="1.3" fill="#000"/><path d="M3 19 H9 L6 22 Z" fill="#000"/></svg><div class="b" style="left:493px;top:33.5px;width:73px;height:22.5px;border:1px solid #d0d0d0;box-sizing:border-box;background:#fff;"></div><div class="t" style="left:499.2px;top:38.5px;font-size:10px;color:#222;letter-spacing:-0.65px;word-spacing:1.5px;">Slice 1</div><svg class="s" style="left:548px;top:41.5px;" width="10" height="6" viewBox="0 0 10 6"><path d="M0.5 0.5 L5 5 L9.5 0.5" fill="none" stroke="#333" stroke-width="1.2"/></svg><div class="b" style="left:10px;top:57px;width:237px;height:1px;background:#e6e6e6;"></div><div class="b" style="left:261px;top:57px;width:230px;height:1px;background:#e6e6e6;"></div><svg class="s" style="left:9.5px;top:61.5px;overflow:hidden;" width="477.0" height="436.0" viewBox="0 0 477.0 436.0"><line x1="51.0" y1="0" x2="51.0" y2="436.0" stroke="#dcdcdc" stroke-width="1"/><line x1="118.89999999999998" y1="0" x2="118.89999999999998" y2="436.0" stroke="#dcdcdc" stroke-width="1"/><line x1="186.79999999999995" y1="0" x2="186.79999999999995" y2="436.0" stroke="#dcdcdc" stroke-width="1"/><line x1="254.70000000000005" y1="0" x2="254.70000000000005" y2="436.0" stroke="#dcdcdc" stroke-width="1"/><line x1="322.6" y1="0" x2="322.6" y2="436.0" stroke="#dcdcdc" stroke-width="1"/><line x1="390.5" y1="0" x2="390.5" y2="436.0" stroke="#dcdcdc" stroke-width="1"/><line x1="458.4000000000001" y1="0" x2="458.4000000000001" y2="436.0" stroke="#dcdcdc" stroke-width="1"/><line x1="0" y1="44.5" x2="477.0" y2="44.5" stroke="#dcdcdc" stroke-width="1"/><line x1="0" y1="112.4" x2="477.0" y2="112.4" stroke="#dcdcdc" stroke-width="1"/><line x1="0" y1="180.3" x2="477.0" y2="180.3" stroke="#dcdcdc" stroke-width="1"/><line x1="0" y1="248.20000000000005" x2="477.0" y2="248.20000000000005" stroke="#dcdcdc" stroke-width="1"/><line x1="0" y1="316.1" x2="477.0" y2="316.1" stroke="#dcdcdc" stroke-width="1"/><line x1="0" y1="384.0" x2="477.0" y2="384.0" stroke="#dcdcdc" stroke-width="1"/><g transform="translate(-572.5,-61.5)"><defs><clipPath id="cp1"><polygon points="749.5,60.5 1021.7,179.4 884.6,490.0 612.7,370.2"/></clipPath><filter id="bl1" x="500" y="0" width="600" height="560" filterUnits="userSpaceOnUse"><feGaussianBlur stdDeviation="10"/></filter><filter id="fb1" x="500" y="0" width="600" height="560" filterUnits="userSpaceOnUse"><feGaussianBlur stdDeviation="6.5"/></filter><filter id="fs1" x="500" y="0" width="600" height="560" filterUnits="userSpaceOnUse"><feGaussianBlur stdDeviation="2.5"/></filter><filter id="fr1" x="500" y="0" width="600" height="560" filterUnits="userSpaceOnUse"><feGaussianBlur stdDeviation="1.2"/></filter><filter id="tx1" x="490" y="-50" width="660" height="660" filterUnits="userSpaceOnUse" color-interpolation-filters="sRGB"><feTurbulence type="fractalNoise" baseFrequency="0.05 0.16" numOctaves="2" seed="10" result="n"/><feColorMatrix in="n" type="matrix" values="1 0 0 0 0  1 0 0 0 0  1 0 0 0 0  0 0 0 0 1" result="nl"/><feComposite in="SourceGraphic" in2="nl" operator="arithmetic" k1="1.35" k2="0.32499999999999996" k3="0" k4="0"/></filter><filter id="tc1" x="500" y="0" width="600" height="560" filterUnits="userSpaceOnUse" color-interpolation-filters="sRGB"><feTurbulence type="fractalNoise" baseFrequency="0.13" numOctaves="3" seed="16" result="m"/><feColorMatrix in="m" type="matrix" values="1 0 0 0 0  0 1 0 0 0  0 0 1 0 0  0 0 0 0 1" result="mc"/><feComposite in="SourceGraphic" in2="mc" operator="arithmetic" k1="3.0" k2="-0.5" k3="0" k4="0"/></filter><filter id="tw1" x="500" y="0" width="600" height="560" filterUnits="userSpaceOnUse" color-interpolation-filters="sRGB"><feTurbulence type="fractalNoise" baseFrequency="0.15" numOctaves="2" seed="8" result="m"/><feColorMatrix in="m" type="matrix" values="1 0 0 0 0  0 1 0 0 0  0 0 1 0 0  0 0 0 0 1" result="mc"/><feComposite in="SourceGraphic" in2="mc" operator="arithmetic" k1="1.3" k2="0.35" k3="0" k4="0"/></filter></defs><g clip-path="url(#cp1)"><g transform="rotate(-47 820 280)"><g filter="url(#tx1)"><g transform="rotate(47 820 280)"><g filter="url(#tc1)"><g filter="url(#bl1)"><polygon points="727.7,4.8 766.6,21.8 749.5,60.5 710.6,43.5" fill="rgb(42, 48, 19)" stroke="rgb(42, 48, 19)" stroke-width="1"/><polygon points="766.6,21.8 805.5,38.8 788.4,77.5 749.5,60.5" fill="rgb(42, 48, 19)" stroke="rgb(42, 48, 19)" stroke-width="1"/><polygon points="805.5,38.8 844.4,55.8 827.3,94.5 788.4,77.5" fill="rgb(35, 61, 19)" stroke="rgb(35, 61, 19)" stroke-width="1"/><polygon points="844.4,55.8 883.3,72.7 866.2,111.5 827.3,94.5" fill="rgb(55, 30, 19)" stroke="rgb(55, 30, 19)" stroke-width="1"/><polygon points="883.3,72.7 922.1,89.7 905.0,128.4 866.2,111.5" fill="rgb(81, 40, 13)" stroke="rgb(81, 40, 13)" stroke-width="1"/><polygon points="922.1,89.7 961.0,106.7 943.9,145.4 905.0,128.4" fill="rgb(75, 29, 18)" stroke="rgb(75, 29, 18)" stroke-width="1"/><polygon points="961.0,106.7 999.9,123.7 982.8,162.4 943.9,145.4" fill="rgb(56, 20, 25)" stroke="rgb(56, 20, 25)" stroke-width="1"/><polygon points="999.9,123.7 1038.8,140.7 1021.7,179.4 982.8,162.4" fill="rgb(32, 16, 32)" stroke="rgb(32, 16, 32)" stroke-width="1"/><polygon points="1038.8,140.7 1077.7,157.7 1060.6,196.4 1021.7,179.4" fill="rgb(32, 16, 32)" stroke="rgb(32, 16, 32)" stroke-width="1"/><polygon points="710.6,43.5 749.5,60.5 732.4,99.2 693.5,82.2" fill="rgb(42, 48, 19)" stroke="rgb(42, 48, 19)" stroke-width="1"/><polygon points="749.5,60.5 788.4,77.5 771.3,116.2 732.4,99.2" fill="rgb(42, 48, 19)" stroke="rgb(42, 48, 19)" stroke-width="1"/><polygon points="788.4,77.5 827.3,94.5 810.2,133.2 771.3,116.2" fill="rgb(35, 61, 19)" stroke="rgb(35, 61, 19)" stroke-width="1"/><polygon points="827.3,94.5 866.2,111.5 849.1,150.2 810.2,133.2" fill="rgb(55, 30, 19)" stroke="rgb(55, 30, 19)" stroke-width="1"/><polygon points="866.2,111.5 905.0,128.4 887.9,167.2 849.1,150.2" fill="rgb(81, 40, 13)" stroke="rgb(81, 40, 13)" stroke-width="1"/><polygon points="905.0,128.4 943.9,145.4 926.8,184.1 887.9,167.2" fill="rgb(75, 29, 18)" stroke="rgb(75, 29, 18)" stroke-width="1"/><polygon points="943.9,145.4 982.8,162.4 965.7,201.1 926.8,184.1" fill="rgb(56, 20, 25)" stroke="rgb(56, 20, 25)" stroke-width="1"/><polygon points="982.8,162.4 1021.7,179.4 1004.6,218.1 965.7,201.1" fill="rgb(32, 16, 32)" stroke="rgb(32, 16, 32)" stroke-width="1"/><polygon points="1021.7,179.4 1060.6,196.4 1043.5,235.1 1004.6,218.1" fill="rgb(32, 16, 32)" stroke="rgb(32, 16, 32)" stroke-width="1"/><polygon points="693.5,82.2 732.4,99.2 715.3,137.9 676.4,120.9" fill="rgb(53, 53, 18)" stroke="rgb(53, 53, 18)" stroke-width="1"/><polygon points="732.4,99.2 771.3,116.2 754.2,154.9 715.3,137.9" fill="rgb(53, 53, 18)" stroke="rgb(53, 53, 18)" stroke-width="1"/><polygon points="771.3,116.2 810.2,133.2 793.1,171.9 754.2,154.9" fill="rgb(24, 42, 42)" stroke="rgb(24, 42, 42)" stroke-width="1"/><polygon points="810.2,133.2 849.1,150.2 832.0,188.9 793.1,171.9" fill="rgb(48, 36, 24)" stroke="rgb(48, 36, 24)" stroke-width="1"/><polygon points="849.1,150.2 887.9,167.2 870.8,205.9 832.0,188.9" fill="rgb(27, 65, 51)" stroke="rgb(27, 65, 51)" stroke-width="1"/><polygon points="887.9,167.2 926.8,184.1 909.7,222.9 870.8,205.9" fill="rgb(101, 117, 20)" stroke="rgb(101, 117, 20)" stroke-width="1"/><polygon points="926.8,184.1 965.7,201.1 948.6,239.8 909.7,222.9" fill="rgb(80, 28, 28)" stroke="rgb(80, 28, 28)" stroke-width="1"/><polygon points="965.7,201.1 1004.6,218.1 987.5,256.8 948.6,239.8" fill="rgb(36, 36, 30)" stroke="rgb(36, 36, 30)" stroke-width="1"/><polygon points="1004.6,218.1 1043.5,235.1 1026.4,273.8 987.5,256.8" fill="rgb(36, 36, 30)" stroke="rgb(36, 36, 30)" stroke-width="1"/><polygon points="676.4,120.9 715.3,137.9 698.2,176.6 659.3,159.7" fill="rgb(55, 36, 19)" stroke="rgb(55, 36, 19)" stroke-width="1"/><polygon points="715.3,137.9 754.2,154.9 737.1,193.6 698.2,176.6" fill="rgb(55, 36, 19)" stroke="rgb(55, 36, 19)" stroke-width="1"/><polygon points="754.2,154.9 793.1,171.9 776.0,210.6 737.1,193.6" fill="rgb(35, 67, 18)" stroke="rgb(35, 67, 18)" stroke-width="1"/><polygon points="793.1,171.9 832.0,188.9 814.9,227.6 776.0,210.6" fill="rgb(24, 42, 42)" stroke="rgb(24, 42, 42)" stroke-width="1"/><polygon points="832.0,188.9 870.8,205.9 853.7,244.6 814.9,227.6" fill="rgb(23, 75, 90)" stroke="rgb(23, 75, 90)" stroke-width="1"/><polygon points="870.8,205.9 909.7,222.9 892.6,261.6 853.7,244.6" fill="rgb(129, 146, 17)" stroke="rgb(129, 146, 17)" stroke-width="1"/><polygon points="909.7,222.9 948.6,239.8 931.5,278.6 892.6,261.6" fill="rgb(66, 34, 28)" stroke="rgb(66, 34, 28)" stroke-width="1"/><polygon points="948.6,239.8 987.5,256.8 970.4,295.5 931.5,278.6" fill="rgb(54, 23, 41)" stroke="rgb(54, 23, 41)" stroke-width="1"/><polygon points="987.5,256.8 1026.4,273.8 1009.3,312.5 970.4,295.5" fill="rgb(54, 23, 41)" stroke="rgb(54, 23, 41)" stroke-width="1"/><polygon points="659.3,159.7 698.2,176.6 681.1,215.3 642.2,198.4" fill="rgb(67, 35, 18)" stroke="rgb(67, 35, 18)" stroke-width="1"/><polygon points="698.2,176.6 737.1,193.6 720.0,232.3 681.1,215.3" fill="rgb(67, 35, 18)" stroke="rgb(67, 35, 18)" stroke-width="1"/><polygon points="737.1,193.6 776.0,210.6 758.9,249.3 720.0,232.3" fill="rgb(42, 42, 24)" stroke="rgb(42, 42, 24)" stroke-width="1"/><polygon points="776.0,210.6 814.9,227.6 797.8,266.3 758.9,249.3" fill="rgb(39, 66, 28)" stroke="rgb(39, 66, 28)" stroke-width="1"/><polygon points="814.9,227.6 853.7,244.6 836.6,283.3 797.8,266.3" fill="rgb(144, 162, 16)" stroke="rgb(144, 162, 16)" stroke-width="1"/><polygon points="853.7,244.6 892.6,261.6 875.5,300.3 836.6,283.3" fill="rgb(162, 144, 16)" stroke="rgb(162, 144, 16)" stroke-width="1"/><polygon points="892.6,261.6 931.5,278.6 914.4,317.3 875.5,300.3" fill="rgb(52, 39, 45)" stroke="rgb(52, 39, 45)" stroke-width="1"/><polygon points="931.5,278.6 970.4,295.5 953.3,334.2 914.4,317.3" fill="rgb(35, 54, 24)" stroke="rgb(35, 54, 24)" stroke-width="1"/><polygon points="970.4,295.5 1009.3,312.5 992.2,351.2 953.3,334.2" fill="rgb(35, 54, 24)" stroke="rgb(35, 54, 24)" stroke-width="1"/><polygon points="642.2,198.4 681.1,215.3 664.0,254.1 625.1,237.1" fill="rgb(56, 25, 20)" stroke="rgb(56, 25, 20)" stroke-width="1"/><polygon points="681.1,215.3 720.0,232.3 702.9,271.0 664.0,254.1" fill="rgb(56, 25, 20)" stroke="rgb(56, 25, 20)" stroke-width="1"/><polygon points="720.0,232.3 758.9,249.3 741.8,288.0 702.9,271.0" fill="rgb(28, 66, 39)" stroke="rgb(28, 66, 39)" stroke-width="1"/><polygon points="758.9,249.3 797.8,266.3 780.7,305.0 741.8,288.0" fill="rgb(98, 149, 19)" stroke="rgb(98, 149, 19)" stroke-width="1"/><polygon points="797.8,266.3 836.6,283.3 819.5,322.0 780.7,305.0" fill="rgb(160, 160, 15)" stroke="rgb(160, 160, 15)" stroke-width="1"/><polygon points="836.6,283.3 875.5,300.3 858.4,339.0 819.5,322.0" fill="rgb(132, 115, 19)" stroke="rgb(132, 115, 19)" stroke-width="1"/><polygon points="875.5,300.3 914.4,317.3 897.3,356.0 858.4,339.0" fill="rgb(46, 66, 18)" stroke="rgb(46, 66, 18)" stroke-width="1"/><polygon points="914.4,317.3 953.3,334.2 936.2,373.0 897.3,356.0" fill="rgb(41, 60, 18)" stroke="rgb(41, 60, 18)" stroke-width="1"/><polygon points="953.3,334.2 992.2,351.2 975.1,389.9 936.2,373.0" fill="rgb(41, 60, 18)" stroke="rgb(41, 60, 18)" stroke-width="1"/><polygon points="625.1,237.1 664.0,254.1 646.9,292.8 608.0,275.8" fill="rgb(52, 65, 22)" stroke="rgb(52, 65, 22)" stroke-width="1"/><polygon points="664.0,254.1 702.9,271.0 685.8,309.8 646.9,292.8" fill="rgb(52, 65, 22)" stroke="rgb(52, 65, 22)" stroke-width="1"/><polygon points="702.9,271.0 741.8,288.0 724.7,326.7 685.8,309.8" fill="rgb(53, 148, 67)" stroke="rgb(53, 148, 67)" stroke-width="1"/><polygon points="741.8,288.0 780.7,305.0 763.6,343.7 724.7,326.7" fill="rgb(197, 49, 19)" stroke="rgb(197, 49, 19)" stroke-width="1"/><polygon points="780.7,305.0 819.5,322.0 802.4,360.7 763.6,343.7" fill="rgb(155, 120, 17)" stroke="rgb(155, 120, 17)" stroke-width="1"/><polygon points="819.5,322.0 858.4,339.0 841.3,377.7 802.4,360.7" fill="rgb(98, 149, 19)" stroke="rgb(98, 149, 19)" stroke-width="1"/><polygon points="858.4,339.0 897.3,356.0 880.2,394.7 841.3,377.7" fill="rgb(33, 80, 22)" stroke="rgb(33, 80, 22)" stroke-width="1"/><polygon points="897.3,356.0 936.2,373.0 919.1,411.7 880.2,394.7" fill="rgb(68, 29, 19)" stroke="rgb(68, 29, 19)" stroke-width="1"/><polygon points="936.2,373.0 975.1,389.9 958.0,428.7 919.1,411.7" fill="rgb(68, 29, 19)" stroke="rgb(68, 29, 19)" stroke-width="1"/><polygon points="608.0,275.8 646.9,292.8 629.8,331.5 590.9,314.5" fill="rgb(58, 103, 45)" stroke="rgb(58, 103, 45)" stroke-width="1"/><polygon points="646.9,292.8 685.8,309.8 668.7,348.5 629.8,331.5" fill="rgb(58, 103, 45)" stroke="rgb(58, 103, 45)" stroke-width="1"/><polygon points="685.8,309.8 724.7,326.7 707.6,365.5 668.7,348.5" fill="rgb(130, 113, 28)" stroke="rgb(130, 113, 28)" stroke-width="1"/><polygon points="724.7,326.7 763.6,343.7 746.5,382.4 707.6,365.5" fill="rgb(183, 96, 17)" stroke="rgb(183, 96, 17)" stroke-width="1"/><polygon points="763.6,343.7 802.4,360.7 785.3,399.4 746.5,382.4" fill="rgb(41, 149, 68)" stroke="rgb(41, 149, 68)" stroke-width="1"/><polygon points="802.4,360.7 841.3,377.7 824.2,416.4 785.3,399.4" fill="rgb(31, 134, 70)" stroke="rgb(31, 134, 70)" stroke-width="1"/><polygon points="841.3,377.7 880.2,394.7 863.1,433.4 824.2,416.4" fill="rgb(36, 108, 25)" stroke="rgb(36, 108, 25)" stroke-width="1"/><polygon points="880.2,394.7 919.1,411.7 902.0,450.4 863.1,433.4" fill="rgb(36, 108, 25)" stroke="rgb(36, 108, 25)" stroke-width="1"/><polygon points="919.1,411.7 958.0,428.7 940.9,467.4 902.0,450.4" fill="rgb(36, 108, 25)" stroke="rgb(36, 108, 25)" stroke-width="1"/><polygon points="590.9,314.5 629.8,331.5 612.7,370.2 573.8,353.2" fill="rgb(55, 30, 24)" stroke="rgb(55, 30, 24)" stroke-width="1"/><polygon points="629.8,331.5 668.7,348.5 651.6,387.2 612.7,370.2" fill="rgb(55, 30, 24)" stroke="rgb(55, 30, 24)" stroke-width="1"/><polygon points="668.7,348.5 707.6,365.5 690.5,404.2 651.6,387.2" fill="rgb(54, 47, 18)" stroke="rgb(54, 47, 18)" stroke-width="1"/><polygon points="707.6,365.5 746.5,382.4 729.4,421.2 690.5,404.2" fill="rgb(165, 113, 13)" stroke="rgb(165, 113, 13)" stroke-width="1"/><polygon points="746.5,382.4 785.3,399.4 768.2,438.1 729.4,421.2" fill="rgb(74, 34, 18)" stroke="rgb(74, 34, 18)" stroke-width="1"/><polygon points="785.3,399.4 824.2,416.4 807.1,455.1 768.2,438.1" fill="rgb(42, 48, 19)" stroke="rgb(42, 48, 19)" stroke-width="1"/><polygon points="824.2,416.4 863.1,433.4 846.0,472.1 807.1,455.1" fill="rgb(37, 93, 26)" stroke="rgb(37, 93, 26)" stroke-width="1"/><polygon points="863.1,433.4 902.0,450.4 884.9,489.1 846.0,472.1" fill="rgb(66, 40, 23)" stroke="rgb(66, 40, 23)" stroke-width="1"/><polygon points="902.0,450.4 940.9,467.4 923.8,506.1 884.9,489.1" fill="rgb(66, 40, 23)" stroke="rgb(66, 40, 23)" stroke-width="1"/><polygon points="573.8,353.2 612.7,370.2 595.6,408.9 556.7,391.9" fill="rgb(55, 30, 24)" stroke="rgb(55, 30, 24)" stroke-width="1"/><polygon points="612.7,370.2 651.6,387.2 634.5,425.9 595.6,408.9" fill="rgb(55, 30, 24)" stroke="rgb(55, 30, 24)" stroke-width="1"/><polygon points="651.6,387.2 690.5,404.2 673.4,442.9 634.5,425.9" fill="rgb(54, 47, 18)" stroke="rgb(54, 47, 18)" stroke-width="1"/><polygon points="690.5,404.2 729.4,421.2 712.3,459.9 673.4,442.9" fill="rgb(165, 113, 13)" stroke="rgb(165, 113, 13)" stroke-width="1"/><polygon points="729.4,421.2 768.2,438.1 751.1,476.9 712.3,459.9" fill="rgb(74, 34, 18)" stroke="rgb(74, 34, 18)" stroke-width="1"/><polygon points="768.2,438.1 807.1,455.1 790.0,493.8 751.1,476.9" fill="rgb(42, 48, 19)" stroke="rgb(42, 48, 19)" stroke-width="1"/><polygon points="807.1,455.1 846.0,472.1 828.9,510.8 790.0,493.8" fill="rgb(37, 93, 26)" stroke="rgb(37, 93, 26)" stroke-width="1"/><polygon points="846.0,472.1 884.9,489.1 867.8,527.8 828.9,510.8" fill="rgb(66, 40, 23)" stroke="rgb(66, 40, 23)" stroke-width="1"/><polygon points="884.9,489.1 923.8,506.1 906.7,544.8 867.8,527.8" fill="rgb(66, 40, 23)" stroke="rgb(66, 40, 23)" stroke-width="1"/></g></g><g filter="url(#tw1)"><g filter="url(#fb1)"><path d="M909.1 162.9 C924.0 168.6 922.8 197.2 914.5 222.8 C903.8 264.5 874.7 339.8 838.4 376.8 C820.5 390.7 804.3 400.4 775.9 399.9 L710.2 391.4 C692.1 380.7 691.1 347.0 704.5 332.5 C712.6 309.8 729.9 277.8 777.9 243.2 C805.9 224.7 844.4 196.1 909.1 164.9 Z" fill="rgb(165, 158, 50)"/><ellipse cx="858" cy="238" rx="62" ry="28" transform="rotate(-47 858 238)" fill="rgb(180, 168, 50)"/><ellipse cx="752" cy="325" rx="38" ry="15" transform="rotate(-60 752 325)" fill="rgb(190, 60, 45)"/><ellipse cx="805" cy="352" rx="30" ry="17" transform="rotate(-50 805 352)" fill="rgb(60, 150, 110)"/><ellipse cx="668" cy="342" rx="40" ry="15" transform="rotate(-40 668 342)" fill="rgb(60, 150, 90)"/><ellipse cx="878" cy="268" rx="18" ry="10" transform="rotate(-50 878 268)" fill="rgb(150, 110, 90)"/></g><g filter="url(#fs1)"><path d="M708 345 Q760 272 842 207 Q880 178 906 166" fill="none" stroke="rgb(45, 70, 130)" stroke-width="6"/><ellipse cx="745" cy="394" rx="24" ry="9" transform="rotate(20 745 394)" fill="rgb(130, 50, 35)"/><circle cx="718" cy="376" r="12" fill="rgb(190, 190, 50)"/><circle cx="935" cy="218" r="8" fill="rgb(190, 110, 110)"/><circle cx="865" cy="139" r="10" fill="rgb(130, 80, 35)"/><circle cx="746" cy="125" r="9" fill="rgb(160, 110, 40)"/><circle cx="892" cy="331" r="14" fill="rgb(80, 35, 25)"/><circle cx="940" cy="310" r="13" fill="rgb(80, 35, 25)"/></g><g filter="url(#fr1)"><circle cx="922" cy="151" r="15.5" fill="rgb(220, 60, 40)"/></g></g></g></g></g></g><path d="M788.4 77.5L651.6 387.2M827.3 94.5L690.5 404.2M866.2 111.5L729.4 421.2M905.0 128.4L768.2 438.1M943.9 145.4L807.1 455.1M982.8 162.4L846.0 472.1M732.4 99.2L1004.6 218.1M715.3 137.9L987.5 256.8M698.2 176.6L970.4 295.5M681.1 215.3L953.3 334.2M664.0 254.1L936.2 373.0M646.9 292.8L919.1 411.7M629.8 331.5L902.0 450.4" stroke="#000" stroke-width="1.1" fill="none"/><polygon points="1003,172.5 1021.7,179.4 1006.5,212 1005,200" fill="#000"/><polygon points="749.5,60.5 1021.7,179.4 884.6,490.0 612.7,370.2" fill="none" stroke="#000" stroke-width="2.4"/></g></svg><div class="clip" style="left:9.5px;top:61.5px;width:477.0px;height:436.0px;"><div class="t" style="left:451.20000000000005px;top:104.5px;font-size:11px;line-height:12px;color:#111;">IL: 4200<br>XL: 5502</div><div class="t" style="left:-7.2000000000000455px;top:294.5px;font-size:11px;line-height:12px;color:#111;width:44px;text-align:right;">IL: 3502</div><div class="t" style="left:291.20000000000005px;top:428.5px;font-size:11px;line-height:12px;color:#111;">IL: 4200</div></div><div class="b" style="left:9px;top:61px;width:1px;height:437px;background:#000;"></div><div class="b" style="left:9px;top:61px;width:478px;height:1.3px;background:#000;"></div><div class="b" style="left:486px;top:61px;width:1.2px;height:437px;background:#000;"></div><div class="b" style="left:9px;top:497px;width:478px;height:1.2px;background:#000;"></div><div class="b" style="left:9.5px;top:105.5px;width:5px;height:1px;background:#000;"></div><div class="b" style="left:9.5px;top:173.4px;width:5px;height:1px;background:#000;"></div><div class="b" style="left:9.5px;top:241.3px;width:5px;height:1px;background:#000;"></div><div class="b" style="left:9.5px;top:309.20000000000005px;width:5px;height:1px;background:#000;"></div><div class="b" style="left:9.5px;top:377.1px;width:5px;height:1px;background:#000;"></div><div class="b" style="left:9.5px;top:445.0px;width:5px;height:1px;background:#000;"></div><div class="b" style="left:60.0px;top:492px;width:1px;height:5px;background:#000;"></div><div class="b" style="left:127.9px;top:492px;width:1px;height:5px;background:#000;"></div><div class="b" style="left:195.8px;top:492px;width:1px;height:5px;background:#000;"></div><div class="b" style="left:263.7px;top:492px;width:1px;height:5px;background:#000;"></div><div class="b" style="left:331.6px;top:492px;width:1px;height:5px;background:#000;"></div><div class="b" style="left:399.5px;top:492px;width:1px;height:5px;background:#000;"></div><div class="b" style="left:467.4px;top:492px;width:1px;height:5px;background:#000;"></div><div class="t lab" style="left:16px;top:98.0px;">7442000</div><div class="t lab" style="left:16px;top:165.9px;">7440000</div><div class="t lab" style="left:16px;top:233.8px;">7438000</div><div class="t lab" style="left:16px;top:301.70000000000005px;">7436000</div><div class="t lab" style="left:16px;top:369.6px;">7434000</div><div class="t lab" style="left:16px;top:437.5px;">7432000</div><div class="t lab" style="left:38.5px;top:476px;width:44px;text-align:center;">596000</div><div class="t lab" style="left:106.4px;top:476px;width:44px;text-align:center;">598000</div><div class="t lab" style="left:174.3px;top:476px;width:44px;text-align:center;">600000</div><div class="t lab" style="left:242.2px;top:476px;width:44px;text-align:center;">602000</div><div class="t lab" style="left:310.1px;top:476px;width:44px;text-align:center;">604000</div><div class="t lab" style="left:378.0px;top:476px;width:44px;text-align:center;">606000</div><div class="t lab" style="left:445.9px;top:476px;width:44px;text-align:center;">608000</div><div class="t" style="left:226px;top:477px;font-size:16px;font-weight:bold;color:#000;background:rgba(255,255,255,0.55);line-height:17px;">X [m]</div><div class="t" style="left:0.5px;top:271.5px;font-size:16px;font-weight:bold;color:#000;line-height:17px;width:40px;text-align:center;transform:rotate(-90deg);">Y [m]</div><svg class="s" style="left:496px;top:87px;" width="11" height="11" viewBox="0 0 11 11"><rect x="0.5" y="0.5" width="10" height="10" fill="#fff" stroke="#000" stroke-width="1.2"/></svg><div class="t" style="left:516px;top:86.5px;font-size:12px;color:#000;letter-spacing:-0.8px;">Link</div><svg class="s" style="left:547.5px;top:87.5px;" width="13" height="13" viewBox="0 0 13 13"><circle cx="6.5" cy="6.5" r="5.4" fill="#fff" stroke="#000" stroke-width="1.8"/><path d="M6.5 1.1 A5.4 5.4 0 0 1 6.5 11.9 Z" fill="#000"/></svg><div class="b" style="left:513px;top:105.5px;width:53px;height:1px;background:#6e6e6e;"></div><div class="b" style="left:494px;top:105px;width:16px;height:16px;background:#ff0000;border:1px solid #000;box-sizing:border-box;"></div><div class="t" style="left:494px;top:106px;width:16px;text-align:center;font-size:12px;font-weight:bold;color:#fff;line-height:14px;">R</div><div class="b" style="left:514px;top:109px;width:51px;height:20px;background:#f5f5f5;border:1px solid #d4d4d4;box-sizing:border-box;"></div><div class="b" style="left:549px;top:110px;width:15px;height:18px;background:#e3e3e3;border-left:1px solid #d4d4d4;box-sizing:border-box;"></div><svg class="s" style="left:553px;top:117.5px;" width="6" height="4" viewBox="0 0 6 4"><path d="M0 0 L5.5 0 L2.75 3 Z" fill="#000"/></svg><div class="t" style="left:519px;top:111px;font-size:12px;color:#1a1a1a;line-height:16px;letter-spacing:-0.2px;">7.81</div><div class="b" style="left:532.5px;top:134.5px;width:32px;height:19px;background:#fff;border:1px solid #d7d7d7;box-sizing:border-box;"></div><div class="t" style="left:536px;top:136.5px;font-size:12px;color:#909090;line-height:15px;">1</div><svg class="s" style="left:522.5px;top:138.0px;" width="6" height="4" viewBox="0 0 6 4"><path d="M0 3.5 L3 0 L6 3.5 Z" fill="#8a8a8a"/></svg><svg class="s" style="left:522.5px;top:147.5px;" width="6" height="4" viewBox="0 0 6 4"><path d="M0 0 L6 0 L3 3.5 Z" fill="#8a8a8a"/></svg><div class="t" style="left:498px;top:134.0px;font-size:16px;color:#808080;line-height:19px;">k</div><div class="b" style="left:532.5px;top:158.5px;width:32px;height:19px;background:#fff;border:1px solid #d7d7d7;box-sizing:border-box;"></div><div class="t" style="left:536px;top:160.5px;font-size:12px;color:#1a1a1a;line-height:15px;">1</div><svg class="s" style="left:522.5px;top:162.0px;" width="6" height="4" viewBox="0 0 6 4"><path d="M0 3.5 L3 0 L6 3.5 Z" fill="#000"/></svg><svg class="s" style="left:522.5px;top:171.5px;" width="6" height="4" viewBox="0 0 6 4"><path d="M0 0 L6 0 L3 3.5 Z" fill="#000"/></svg><svg class="s" style="left:494.5px;top:159.7px;" width="17" height="17" viewBox="0 0 17 17"><circle cx="8.5" cy="8.5" r="6.9" fill="#fff" stroke="#000" stroke-width="1.9"/><path d="M8.5 1.6 A6.9 6.9 0 0 1 8.5 15.4 Z" fill="#000"/></svg><div class="b" style="left:532.5px;top:182.5px;width:32px;height:19px;background:#fff;border:1px solid #d7d7d7;box-sizing:border-box;"></div><div class="t" style="left:536px;top:184.5px;font-size:12px;color:#1a1a1a;line-height:15px;">1</div><svg class="s" style="left:522.5px;top:186.0px;" width="6" height="4" viewBox="0 0 6 4"><path d="M0 3.5 L3 0 L6 3.5 Z" fill="#000"/></svg><svg class="s" style="left:522.5px;top:195.5px;" width="6" height="4" viewBox="0 0 6 4"><path d="M0 0 L6 0 L3 3.5 Z" fill="#000"/></svg><svg class="s" style="left:495px;top:184.0px;" width="16" height="16" viewBox="0 0 16 16"><g stroke="#000" fill="none" stroke-width="1.2">
<path d="M8 1.5 V13 M2 4 H14"/>
<path d="M3 4 L0.5 9 M3 4 L5.5 9 M13 4 L10.5 9 M13 4 L15.5 9"/>
</g>
<path d="M0.3 9 H5.7 A2.7 2.2 0 0 1 0.3 9 Z M10.3 9 H15.7 A2.7 2.2 0 0 1 10.3 9 Z" fill="#000"/>
<rect x="4.5" y="13" width="7" height="2.5" fill="#000"/><circle cx="8" cy="1.6" r="1.4" fill="#000"/></svg><div class="b" style="left:513px;top:208.5px;width:53px;height:1px;background:#6e6e6e;"></div><div class="b" style="left:494px;top:208px;width:16px;height:16px;background:#00e000;border:1px solid #000;box-sizing:border-box;"></div><div class="t" style="left:494px;top:209px;width:16px;text-align:center;font-size:12px;font-weight:bold;color:#fff;line-height:14px;">G</div><div class="b" style="left:514px;top:212px;width:51px;height:20px;background:#f5f5f5;border:1px solid #d4d4d4;box-sizing:border-box;"></div><div class="b" style="left:549px;top:213px;width:15px;height:18px;background:#e3e3e3;border-left:1px solid #d4d4d4;box-sizing:border-box;"></div><svg class="s" style="left:553px;top:220.5px;" width="6" height="4" viewBox="0 0 6 4"><path d="M0 0 L5.5 0 L2.75 3 Z" fill="#000"/></svg><div class="t" style="left:519px;top:214px;font-size:12px;color:#1a1a1a;line-height:16px;letter-spacing:-0.2px;">15.62</div><div class="b" style="left:532.5px;top:237.5px;width:32px;height:19px;background:#fff;border:1px solid #d7d7d7;box-sizing:border-box;"></div><div class="t" style="left:536px;top:239.5px;font-size:12px;color:#909090;line-height:15px;">1</div><svg class="s" style="left:522.5px;top:241.0px;" width="6" height="4" viewBox="0 0 6 4"><path d="M0 3.5 L3 0 L6 3.5 Z" fill="#8a8a8a"/></svg><svg class="s" style="left:522.5px;top:250.5px;" width="6" height="4" viewBox="0 0 6 4"><path d="M0 0 L6 0 L3 3.5 Z" fill="#8a8a8a"/></svg><div class="t" style="left:498px;top:237.0px;font-size:16px;color:#808080;line-height:19px;">k</div><div class="b" style="left:532.5px;top:261.5px;width:32px;height:19px;background:#fff;border:1px solid #d7d7d7;box-sizing:border-box;"></div><div class="t" style="left:536px;top:263.5px;font-size:12px;color:#1a1a1a;line-height:15px;">1</div><svg class="s" style="left:522.5px;top:265.0px;" width="6" height="4" viewBox="0 0 6 4"><path d="M0 3.5 L3 0 L6 3.5 Z" fill="#000"/></svg><svg class="s" style="left:522.5px;top:274.5px;" width="6" height="4" viewBox="0 0 6 4"><path d="M0 0 L6 0 L3 3.5 Z" fill="#000"/></svg><svg class="s" style="left:494.5px;top:262.7px;" width="17" height="17" viewBox="0 0 17 17"><circle cx="8.5" cy="8.5" r="6.9" fill="#fff" stroke="#000" stroke-width="1.9"/><path d="M8.5 1.6 A6.9 6.9 0 0 1 8.5 15.4 Z" fill="#000"/></svg><div class="b" style="left:532.5px;top:285.5px;width:32px;height:19px;background:#fff;border:1px solid #d7d7d7;box-sizing:border-box;"></div><div class="t" style="left:536px;top:287.5px;font-size:12px;color:#1a1a1a;line-height:15px;">1</div><svg class="s" style="left:522.5px;top:289.0px;" width="6" height="4" viewBox="0 0 6 4"><path d="M0 3.5 L3 0 L6 3.5 Z" fill="#000"/></svg><svg class="s" style="left:522.5px;top:298.5px;" width="6" height="4" viewBox="0 0 6 4"><path d="M0 0 L6 0 L3 3.5 Z" fill="#000"/></svg><svg class="s" style="left:495px;top:287.0px;" width="16" height="16" viewBox="0 0 16 16"><g stroke="#000" fill="none" stroke-width="1.2">
<path d="M8 1.5 V13 M2 4 H14"/>
<path d="M3 4 L0.5 9 M3 4 L5.5 9 M13 4 L10.5 9 M13 4 L15.5 9"/>
</g>
<path d="M0.3 9 H5.7 A2.7 2.2 0 0 1 0.3 9 Z M10.3 9 H15.7 A2.7 2.2 0 0 1 10.3 9 Z" fill="#000"/>
<rect x="4.5" y="13" width="7" height="2.5" fill="#000"/><circle cx="8" cy="1.6" r="1.4" fill="#000"/></svg><div class="b" style="left:513px;top:311.5px;width:53px;height:1px;background:#6e6e6e;"></div><div class="b" style="left:494px;top:311px;width:16px;height:16px;background:#0000ff;border:1px solid #000;box-sizing:border-box;"></div><div class="t" style="left:494px;top:312px;width:16px;text-align:center;font-size:12px;font-weight:bold;color:#fff;line-height:14px;">B</div><div class="b" style="left:514px;top:315px;width:51px;height:20px;background:#f5f5f5;border:1px solid #d4d4d4;box-sizing:border-box;"></div><div class="b" style="left:549px;top:316px;width:15px;height:18px;background:#e3e3e3;border-left:1px solid #d4d4d4;box-sizing:border-box;"></div><svg class="s" style="left:553px;top:323.5px;" width="6" height="4" viewBox="0 0 6 4"><path d="M0 0 L5.5 0 L2.75 3 Z" fill="#000"/></svg><div class="t" style="left:519px;top:317px;font-size:12px;color:#1a1a1a;line-height:16px;letter-spacing:-0.2px;">31.25</div><div class="b" style="left:532.5px;top:340.5px;width:32px;height:19px;background:#fff;border:1px solid #d7d7d7;box-sizing:border-box;"></div><div class="t" style="left:536px;top:342.5px;font-size:12px;color:#909090;line-height:15px;">1</div><svg class="s" style="left:522.5px;top:344.0px;" width="6" height="4" viewBox="0 0 6 4"><path d="M0 3.5 L3 0 L6 3.5 Z" fill="#8a8a8a"/></svg><svg class="s" style="left:522.5px;top:353.5px;" width="6" height="4" viewBox="0 0 6 4"><path d="M0 0 L6 0 L3 3.5 Z" fill="#8a8a8a"/></svg><div class="t" style="left:498px;top:340.0px;font-size:16px;color:#808080;line-height:19px;">k</div><div class="b" style="left:532.5px;top:364.5px;width:32px;height:19px;background:#fff;border:1px solid #d7d7d7;box-sizing:border-box;"></div><div class="t" style="left:536px;top:366.5px;font-size:12px;color:#1a1a1a;line-height:15px;">1</div><svg class="s" style="left:522.5px;top:368.0px;" width="6" height="4" viewBox="0 0 6 4"><path d="M0 3.5 L3 0 L6 3.5 Z" fill="#000"/></svg><svg class="s" style="left:522.5px;top:377.5px;" width="6" height="4" viewBox="0 0 6 4"><path d="M0 0 L6 0 L3 3.5 Z" fill="#000"/></svg><svg class="s" style="left:494.5px;top:365.7px;" width="17" height="17" viewBox="0 0 17 17"><circle cx="8.5" cy="8.5" r="6.9" fill="#fff" stroke="#000" stroke-width="1.9"/><path d="M8.5 1.6 A6.9 6.9 0 0 1 8.5 15.4 Z" fill="#000"/></svg><div class="b" style="left:532.5px;top:388.5px;width:32px;height:19px;background:#fff;border:1px solid #d7d7d7;box-sizing:border-box;"></div><div class="t" style="left:536px;top:390.5px;font-size:12px;color:#1a1a1a;line-height:15px;">1</div><svg class="s" style="left:522.5px;top:392.0px;" width="6" height="4" viewBox="0 0 6 4"><path d="M0 3.5 L3 0 L6 3.5 Z" fill="#000"/></svg><svg class="s" style="left:522.5px;top:401.5px;" width="6" height="4" viewBox="0 0 6 4"><path d="M0 0 L6 0 L3 3.5 Z" fill="#000"/></svg><svg class="s" style="left:495px;top:390.0px;" width="16" height="16" viewBox="0 0 16 16"><g stroke="#000" fill="none" stroke-width="1.2">
<path d="M8 1.5 V13 M2 4 H14"/>
<path d="M3 4 L0.5 9 M3 4 L5.5 9 M13 4 L10.5 9 M13 4 L15.5 9"/>
</g>
<path d="M0.3 9 H5.7 A2.7 2.2 0 0 1 0.3 9 Z M10.3 9 H15.7 A2.7 2.2 0 0 1 10.3 9 Z" fill="#000"/>
<rect x="4.5" y="13" width="7" height="2.5" fill="#000"/><circle cx="8" cy="1.6" r="1.4" fill="#000"/></svg><svg class="s" style="left:337px;top:390px;" width="100" height="60" viewBox="0 0 100 60"><line x1="26.399999999999977" y1="16.399999999999977" x2="80" y2="36" stroke="#f5a800" stroke-width="5" stroke-linecap="round"/><circle cx="26.399999999999977" cy="16.399999999999977" r="5" fill="#f5a800"/></svg><div class="b" style="left:410.3px;top:417.3px;width:142.9000000000001px;height:68.69999999999999px;border:5.5px solid #f5a800;border-radius:6px;box-sizing:border-box;background:#fff;box-shadow:2px 2px 3px rgba(0,0,0,0.25);"></div><div class="t" style="left:407.8px;top:430.3px;width:142.9000000000001px;text-align:center;font-size:18.9px;line-height:21px;color:#111;">Mid partial<br>angle stack</div></div>
<div class="pan" style="left:1137px;width:570px;"><div class="b" style="left:0px;top:2px;width:570px;height:501px;border:1px solid #646464;box-sizing:border-box;background:#fff;"></div><svg class="s" style="left:3px;top:4px;" width="26" height="26" viewBox="0 0 26 26"><defs><linearGradient id="bkg2" x1="0" y1="0" x2="1" y2="1"><stop offset="0" stop-color="#c070f0"/><stop offset="0.5" stop-color="#9a22e0"/><stop offset="1" stop-color="#8a10d0"/></linearGradient></defs>
<path d="M3.1 5.4 L15.5 3.3 L24.8 14 L12.2 19.2 Z" fill="url(#bkg2)"/>
<path d="M3.1 5.4 L12.2 19.2 L12.6 23.6 L3.4 9.8 Z" fill="#9c30e0"/>
<path d="M12.2 19.2 L24.8 14 L24.6 17.6 L12.6 22.4 Z" fill="#e6eee0"/>
<path d="M12.6 22.4 L24.6 17.6 L24.8 18.8 L12.6 23.8 Z" fill="#a030e0"/>
<text x="14" y="15.3" font-family="Liberation Sans" font-weight="bold" font-size="12.5" fill="#fff" text-anchor="middle" transform="rotate(-14 14 11)">?</text></svg><div class="t" style="left:34.5px;top:9px;font-size:12px;color:#000;letter-spacing:-0.75px;">Name:</div><div class="b" style="left:70px;top:7px;width:99px;height:20px;border:1px solid #cfcfcf;box-sizing:border-box;background:#fff;"></div><div class="t" style="left:73.3px;top:9px;font-size:12px;color:#000;letter-spacing:-1.1px;word-spacing:1px;">M Plot 2</div><svg class="s" style="left:178.5px;top:8.5px;" width="16" height="16" viewBox="0 0 16 16"><path d="M1.2 10.5 C1.4 5.5 4.5 3.2 9 3.3" fill="none" stroke="#3cb83c" stroke-width="2.6" stroke-linecap="round"/>
<path d="M8.3 -0.3 L14.3 4.1 L8.3 8.6 Z" fill="#3cb83c"/>
<path d="M14.8 5.6 C14.6 10.6 11.5 12.8 7 12.7" fill="none" stroke="#2ea83a" stroke-width="2.6" stroke-linecap="round"/>
<path d="M7.7 7.5 L1.7 11.9 L7.7 16.3 Z" fill="#2ea83a"/></svg><svg class="s" style="left:201px;top:12px;" width="11" height="11" viewBox="0 0 11 11"><rect x="0.5" y="0.5" width="10" height="10" fill="#fff" stroke="#000" stroke-width="1.2"/><path d="M2.3 5.2 L4.5 8.2 L8.8 2.6" fill="none" stroke="#000" stroke-width="1.9"/></svg><div class="t" style="left:217.5px;top:10.7px;font-size:12px;color:#000;letter-spacing:-0.75px;">Auto</div><svg class="s" style="left:248.5px;top:12px;" width="11" height="11" viewBox="0 0 11 11"><rect x="0.5" y="0.5" width="10" height="10" fill="#fff" stroke="#000" stroke-width="1.2"/></svg><div class="t" style="left:264.3px;top:10.7px;font-size:12px;color:#000;letter-spacing:-0.55px;">Disable</div><svg class="s" style="left:309px;top:4px;" width="30" height="26" viewBox="0 0 30 26"><g fill="none" stroke="#000" stroke-width="2.1">
<ellipse cx="10.9" cy="16" rx="5.4" ry="3.3" transform="rotate(-45 10.9 16)"/>
<ellipse cx="17.1" cy="9.7" rx="5.4" ry="3.3" transform="rotate(-45 17.1 9.7)"/>
<path d="M11.8 15.1 L16.2 10.6" stroke-width="2.4"/></g></svg><div class="b" style="left:337px;top:7px;width:80px;height:20px;border:1px solid #cfcfcf;box-sizing:border-box;background:#fff;"></div><div class="t" style="left:339.3px;top:9.5px;font-size:12px;color:#000;letter-spacing:-0.7px;">Link</div><div class="b" style="left:11px;top:36.5px;width:2px;height:2px;background:#a0a0a0;"></div><div class="b" style="left:11px;top:40.5px;width:2px;height:2px;background:#a0a0a0;"></div><div class="b" style="left:11px;top:44.5px;width:2px;height:2px;background:#a0a0a0;"></div><div class="b" style="left:11px;top:48.5px;width:2px;height:2px;background:#a0a0a0;"></div><svg class="s" style="left:21.5px;top:35.5px;" width="10" height="16" viewBox="0 0 10 16"><path d="M0.5 0.5 L0.5 12.5 L3.3 10 L5.5 15 L7.3 14.2 L5.2 9.3 L9.2 9.1 Z" fill="#fff" stroke="#8a8a8a" stroke-width="1"/></svg><svg class="s" style="left:36.5px;top:43px;" width="6" height="4" viewBox="0 0 6 4"><path d="M0 0 L5.5 0 L2.75 3 Z" fill="#000"/></svg><div class="b" style="left:49px;top:37.5px;width:1px;height:15px;background:#a8a8a8;"></div><div class="b" style="left:78px;top:37.5px;width:1px;height:15px;background:#a8a8a8;"></div><div class="b" style="left:113px;top:37.5px;width:1px;height:15px;background:#a8a8a8;"></div><div class="b" style="left:142px;top:37.5px;width:1px;height:15px;background:#a8a8a8;"></div><div class="b" style="left:240px;top:37.5px;width:1px;height:15px;background:#a8a8a8;"></div><svg class="s" style="left:54.5px;top:38px;" width="17" height="12" viewBox="0 0 17 12"><path d="M0.3 6 C3.5 -0.8 12.8 -0.8 16 6 C12.8 12.8 3.5 12.8 0.3 6 Z" fill="#000"/>
<circle cx="8.1" cy="6" r="4.1" fill="#fff"/><circle cx="8.1" cy="6" r="2.5" fill="#000"/><circle cx="7" cy="5" r="0.9" fill="#fff"/></svg><svg class="s" style="left:82.5px;top:36px;" width="16" height="16" viewBox="0 0 16 16"><rect x="0.5" y="0.5" width="9.5" height="9" fill="#fff" stroke="#5060c0"/>
<rect x="0.5" y="0.5" width="9.5" height="1.6" fill="#3050c0"/>
<rect x="2" y="3" width="2" height="5" fill="#1010e0"/>
<rect x="5.5" y="4.5" width="10" height="11" fill="#f4f8ff" stroke="#6080c0"/>
<rect x="5.5" y="4.5" width="10" height="1.8" fill="#5070d0"/>
<rect x="7.5" y="8" width="1.8" height="5" fill="#1010e0"/><rect x="9.3" y="10" width="1.8" height="3" fill="#e040c0"/><rect x="11.1" y="8.5" width="1.8" height="4.5" fill="#1010e0"/></svg><svg class="s" style="left:101px;top:43px;" width="6" height="4" viewBox="0 0 6 4"><path d="M0 0 L5.5 0 L2.75 3 Z" fill="#000"/></svg><div class="b" style="left:116px;top:33px;width:23px;height:23px;background:linear-gradient(#fde9c8,#fcd9a4);border:1px solid #ffb41e;box-sizing:border-box;"></div><div class="b" style="left:145px;top:33px;width:23px;height:23px;background:linear-gradient(#fde9c8,#fcd9a4);border:1px solid #ffb41e;box-sizing:border-box;"></div><div class="b" style="left:168px;top:33px;width:23px;height:23px;background:linear-gradient(#fde9c8,#fcd9a4);border:1px solid #ffb41e;box-sizing:border-box;"></div><svg class="s" style="left:119px;top:36.5px;" width="16" height="16" viewBox="0 0 16 16"><rect x="1.5" y="0.5" width="13.5" height="14" fill="#fff"/>
<path d="M1.5 0 L1.5 14.7 L15.5 14.7" fill="none" stroke="#000" stroke-width="1.3"/>
<path d="M0 2 h1.5 M0 5.5 h1.5 M0 9 h1.5 M0 12.5 h1.5 M5 14.7 v1.3 M9 14.7 v1.3 M13 14.7 v1.3" stroke="#000" stroke-width="1"/>
<path d="M11.5 0.5 V14 M2 5.5 H15" stroke="#0000ff" stroke-width="1.2"/></svg><svg class="s" style="left:149px;top:37px;" width="13" height="13" viewBox="0 0 13 13"><path d="M2.5 0 V13 M6.5 0 V13 M10.5 0 V13 M0 2.5 H13 M0 6.5 H13 M0 10.5 H13" stroke="#000" stroke-width="1.3"/></svg><svg class="s" style="left:171px;top:36px;" width="16" height="16" viewBox="0 0 16 16"><rect x="1.0" y="1.0" width="3.6" height="3.6" fill="#f8b8c8"/><rect x="4.5" y="1.0" width="3.6" height="3.6" fill="#e82030"/><rect x="8.0" y="1.0" width="3.6" height="3.6" fill="#ffffff"/><rect x="11.5" y="1.0" width="3.6" height="3.6" fill="#f8c0d0"/><rect x="1.0" y="4.5" width="3.6" height="3.6" fill="#e82030"/><rect x="4.5" y="4.5" width="3.6" height="3.6" fill="#ffffff"/><rect x="8.0" y="4.5" width="3.6" height="3.6" fill="#4050d0"/><rect x="11.5" y="4.5" width="3.6" height="3.6" fill="#ffffff"/><rect x="1.0" y="8.0" width="3.6" height="3.6" fill="#f8b8c8"/><rect x="4.5" y="8.0" width="3.6" height="3.6" fill="#10a0e8"/><rect x="8.0" y="8.0" width="3.6" height="3.6" fill="#90d8e8"/><rect x="11.5" y="8.0" width="3.6" height="3.6" fill="#10a0e8"/><rect x="1.0" y="11.5" width="3.6" height="3.6" fill="#ffffff"/><rect x="4.5" y="11.5" width="3.6" height="3.6" fill="#3048c8"/><rect x="8.0" y="11.5" width="3.6" height="3.6" fill="#f8b8c8"/><rect x="11.5" y="11.5" width="3.6" height="3.6" fill="#ffffff"/><rect x="0.6" y="0.6" width="14.8" height="14.8" fill="none" stroke="#000" stroke-width="1.2"/></svg><svg class="s" style="left:194px;top:36px;" width="16" height="16" viewBox="0 0 16 16"><defs><linearGradient id="gi2" x1="0" y1="0" x2="1" y2="1">
<stop offset="0" stop-color="#ff9cc0"/><stop offset="0.25" stop-color="#e81830"/><stop offset="0.45" stop-color="#ffffff"/><stop offset="0.62" stop-color="#6070e0"/><stop offset="0.8" stop-color="#20a0e8"/><stop offset="1" stop-color="#ffd0e0"/></linearGradient></defs>
<rect x="1" y="1" width="14" height="14" fill="url(#gi2)"/>
<rect x="0.6" y="0.6" width="14.8" height="14.8" fill="none" stroke="#000" stroke-width="1.2"/></svg><svg class="s" style="left:218.5px;top:37.5px;" width="13" height="13" viewBox="0 0 13 13"><path d="M1 1 L11.5 11.5 M11.5 1 L1 11.5" stroke="#dd2828" stroke-width="2.3"/></svg><svg class="s" style="left:246.5px;top:37.5px;" width="13" height="13" viewBox="0 0 13 13"><circle cx="6.5" cy="6.5" r="4.45" fill="#fff" stroke="#0a5cb8" stroke-width="4.1"/></svg><div class="t" style="left:263.5px;top:38px;font-size:12px;color:#000;letter-spacing:-0.2px;">All</div><svg class="s" style="left:288.5px;top:37.5px;" width="14" height="14" viewBox="0 0 14 14"><circle cx="7" cy="7" r="6" fill="#f4f4f4" stroke="#333" stroke-width="1"/></svg><div class="b" style="left:307px;top:33px;width:140px;height:23px;border:1px solid #d0d0d0;box-sizing:border-box;background:#fff;"></div><div class="t" style="left:312.5px;top:38.5px;font-size:10px;color:#555;font-style:italic;letter-spacing:-0.85px;">Select ROI</div><svg class="s" style="left:429px;top:41.5px;" width="10" height="6" viewBox="0 0 10 6"><path d="M0.5 0.5 L5 5 L9.5 0.5" fill="none" stroke="#333" stroke-width="1.2"/></svg><div class="b" style="left:450px;top:37px;width:1px;height:16px;background:#b8b8b8;"></div><svg class="s" style="left:477.5px;top:32px;" width="11" height="25" viewBox="0 0 11 25"><defs><linearGradient id="ovg2" x1="0" y1="0" x2="0" y2="1"><stop offset="0" stop-color="#ffffff"/><stop offset="0.55" stop-color="#ededed"/><stop offset="1" stop-color="#b0b0b0"/></linearGradient></defs>
<path d="M0 0 H7 Q11 0 11 4 V22 Q11 25 8.5 25 H0 Z" fill="url(#ovg2)"/>
<rect x="3" y="16" width="6" height="1.3" fill="#000"/><path d="M3 19 H9 L6 22 Z" fill="#000"/></svg><div class="b" style="left:493px;top:33.5px;width:73px;height:22.5px;border:1px solid #d0d0d0;box-sizing:border-box;background:#fff;"></div><div class="t" style="left:499.2px;top:38.5px;font-size:10px;color:#222;letter-spacing:-0.65px;word-spacing:1.5px;">Slice 2</div><svg class="s" style="left:548px;top:41.5px;" width="10" height="6" viewBox="0 0 10 6"><path d="M0.5 0.5 L5 5 L9.5 0.5" fill="none" stroke="#333" stroke-width="1.2"/></svg><div class="b" style="left:10px;top:57px;width:237px;height:1px;background:#e6e6e6;"></div><div class="b" style="left:261px;top:57px;width:230px;height:1px;background:#e6e6e6;"></div><svg class="s" style="left:9.5px;top:61.5px;overflow:hidden;" width="477.0" height="436.0" viewBox="0 0 477.0 436.0"><line x1="51.0" y1="0" x2="51.0" y2="436.0" stroke="#dcdcdc" stroke-width="1"/><line x1="118.89999999999998" y1="0" x2="118.89999999999998" y2="436.0" stroke="#dcdcdc" stroke-width="1"/><line x1="186.79999999999995" y1="0" x2="186.79999999999995" y2="436.0" stroke="#dcdcdc" stroke-width="1"/><line x1="254.70000000000005" y1="0" x2="254.70000000000005" y2="436.0" stroke="#dcdcdc" stroke-width="1"/><line x1="322.6" y1="0" x2="322.6" y2="436.0" stroke="#dcdcdc" stroke-width="1"/><line x1="390.5" y1="0" x2="390.5" y2="436.0" stroke="#dcdcdc" stroke-width="1"/><line x1="458.4000000000001" y1="0" x2="458.4000000000001" y2="436.0" stroke="#dcdcdc" stroke-width="1"/><line x1="0" y1="44.5" x2="477.0" y2="44.5" stroke="#dcdcdc" stroke-width="1"/><line x1="0" y1="112.4" x2="477.0" y2="112.4" stroke="#dcdcdc" stroke-width="1"/><line x1="0" y1="180.3" x2="477.0" y2="180.3" stroke="#dcdcdc" stroke-width="1"/><line x1="0" y1="248.20000000000005" x2="477.0" y2="248.20000000000005" stroke="#dcdcdc" stroke-width="1"/><line x1="0" y1="316.1" x2="477.0" y2="316.1" stroke="#dcdcdc" stroke-width="1"/><line x1="0" y1="384.0" x2="477.0" y2="384.0" stroke="#dcdcdc" stroke-width="1"/><g transform="translate(-572.5,-61.5)"><defs><clipPath id="cp2"><polygon points="749.5,60.5 1021.7,179.4 884.6,490.0 612.7,370.2"/></clipPath><filter id="bl2" x="500" y="0" width="600" height="560" filterUnits="userSpaceOnUse"><feGaussianBlur stdDeviation="10"/></filter><filter id="fb2" x="500" y="0" width="600" height="560" filterUnits="userSpaceOnUse"><feGaussianBlur stdDeviation="6.5"/></filter><filter id="fs2" x="500" y="0" width="600" height="560" filterUnits="userSpaceOnUse"><feGaussianBlur stdDeviation="2.5"/></filter><filter id="fr2" x="500" y="0" width="600" height="560" filterUnits="userSpaceOnUse"><feGaussianBlur stdDeviation="1.2"/></filter><filter id="tx2" x="490" y="-50" width="660" height="660" filterUnits="userSpaceOnUse" color-interpolation-filters="sRGB"><feTurbulence type="fractalNoise" baseFrequency="0.05 0.16" numOctaves="2" seed="17" result="n"/><feColorMatrix in="n" type="matrix" values="1 0 0 0 0  1 0 0 0 0  1 0 0 0 0  0 0 0 0 1" result="nl"/><feComposite in="SourceGraphic" in2="nl" operator="arithmetic" k1="1.35" k2="0.32499999999999996" k3="0" k4="0"/></filter><filter id="tc2" x="500" y="0" width="600" height="560" filterUnits="userSpaceOnUse" color-interpolation-filters="sRGB"><feTurbulence type="fractalNoise" baseFrequency="0.13" numOctaves="3" seed="21" result="m"/><feColorMatrix in="m" type="matrix" values="1 0 0 0 0  0 1 0 0 0  0 0 1 0 0  0 0 0 0 1" result="mc"/><feComposite in="SourceGraphic" in2="mc" operator="arithmetic" k1="3.0" k2="-0.5" k3="0" k4="0"/></filter><filter id="tw2" x="500" y="0" width="600" height="560" filterUnits="userSpaceOnUse" color-interpolation-filters="sRGB"><feTurbulence type="fractalNoise" baseFrequency="0.15" numOctaves="2" seed="11" result="m"/><feColorMatrix in="m" type="matrix" values="1 0 0 0 0  0 1 0 0 0  0 0 1 0 0  0 0 0 0 1" result="mc"/><feComposite in="SourceGraphic" in2="mc" operator="arithmetic" k1="1.3" k2="0.35" k3="0" k4="0"/></filter></defs><g clip-path="url(#cp2)"><g transform="rotate(-47 820 280)"><g filter="url(#tx2)"><g transform="rotate(47 820 280)"><g filter="url(#tc2)"><g filter="url(#bl2)"><polygon points="727.7,4.8 766.6,21.8 749.5,60.5 710.6,43.5" fill="rgb(55, 30, 19)" stroke="rgb(55, 30, 19)" stroke-width="1"/><polygon points="766.6,21.8 805.5,38.8 788.4,77.5 749.5,60.5" fill="rgb(55, 30, 19)" stroke="rgb(55, 30, 19)" stroke-width="1"/><polygon points="805.5,38.8 844.4,55.8 827.3,94.5 788.4,77.5" fill="rgb(35, 41, 41)" stroke="rgb(35, 41, 41)" stroke-width="1"/><polygon points="844.4,55.8 883.3,72.7 866.2,111.5 827.3,94.5" fill="rgb(61, 24, 24)" stroke="rgb(61, 24, 24)" stroke-width="1"/><polygon points="883.3,72.7 922.1,89.7 905.0,128.4 866.2,111.5" fill="rgb(75, 24, 19)" stroke="rgb(75, 24, 19)" stroke-width="1"/><polygon points="922.1,89.7 961.0,106.7 943.9,145.4 905.0,128.4" fill="rgb(82, 23, 18)" stroke="rgb(82, 23, 18)" stroke-width="1"/><polygon points="961.0,106.7 999.9,123.7 982.8,162.4 943.9,145.4" fill="rgb(55, 30, 24)" stroke="rgb(55, 30, 24)" stroke-width="1"/><polygon points="999.9,123.7 1038.8,140.7 1021.7,179.4 982.8,162.4" fill="rgb(37, 20, 37)" stroke="rgb(37, 20, 37)" stroke-width="1"/><polygon points="1038.8,140.7 1077.7,157.7 1060.6,196.4 1021.7,179.4" fill="rgb(37, 20, 37)" stroke="rgb(37, 20, 37)" stroke-width="1"/><polygon points="710.6,43.5 749.5,60.5 732.4,99.2 693.5,82.2" fill="rgb(55, 30, 19)" stroke="rgb(55, 30, 19)" stroke-width="1"/><polygon points="749.5,60.5 788.4,77.5 771.3,116.2 732.4,99.2" fill="rgb(55, 30, 19)" stroke="rgb(55, 30, 19)" stroke-width="1"/><polygon points="788.4,77.5 827.3,94.5 810.2,133.2 771.3,116.2" fill="rgb(35, 41, 41)" stroke="rgb(35, 41, 41)" stroke-width="1"/><polygon points="827.3,94.5 866.2,111.5 849.1,150.2 810.2,133.2" fill="rgb(61, 24, 24)" stroke="rgb(61, 24, 24)" stroke-width="1"/><polygon points="866.2,111.5 905.0,128.4 887.9,167.2 849.1,150.2" fill="rgb(75, 24, 19)" stroke="rgb(75, 24, 19)" stroke-width="1"/><polygon points="905.0,128.4 943.9,145.4 926.8,184.1 887.9,167.2" fill="rgb(82, 23, 18)" stroke="rgb(82, 23, 18)" stroke-width="1"/><polygon points="943.9,145.4 982.8,162.4 965.7,201.1 926.8,184.1" fill="rgb(55, 30, 24)" stroke="rgb(55, 30, 24)" stroke-width="1"/><polygon points="982.8,162.4 1021.7,179.4 1004.6,218.1 965.7,201.1" fill="rgb(37, 20, 37)" stroke="rgb(37, 20, 37)" stroke-width="1"/><polygon points="1021.7,179.4 1060.6,196.4 1043.5,235.1 1004.6,218.1" fill="rgb(37, 20, 37)" stroke="rgb(37, 20, 37)" stroke-width="1"/><polygon points="693.5,82.2 732.4,99.2 715.3,137.9 676.4,120.9" fill="rgb(60, 35, 23)" stroke="rgb(60, 35, 23)" stroke-width="1"/><polygon points="732.4,99.2 771.3,116.2 754.2,154.9 715.3,137.9" fill="rgb(60, 35, 23)" stroke="rgb(60, 35, 23)" stroke-width="1"/><polygon points="771.3,116.2 810.2,133.2 793.1,171.9 754.2,154.9" fill="rgb(28, 52, 52)" stroke="rgb(28, 52, 52)" stroke-width="1"/><polygon points="810.2,133.2 849.1,150.2 832.0,188.9 793.1,171.9" fill="rgb(54, 24, 35)" stroke="rgb(54, 24, 35)" stroke-width="1"/><polygon points="849.1,150.2 887.9,167.2 870.8,205.9 832.0,188.9" fill="rgb(35, 60, 90)" stroke="rgb(35, 60, 90)" stroke-width="1"/><polygon points="887.9,167.2 926.8,184.1 909.7,222.9 870.8,205.9" fill="rgb(126, 126, 50)" stroke="rgb(126, 126, 50)" stroke-width="1"/><polygon points="926.8,184.1 965.7,201.1 948.6,239.8 909.7,222.9" fill="rgb(107, 36, 36)" stroke="rgb(107, 36, 36)" stroke-width="1"/><polygon points="965.7,201.1 1004.6,218.1 987.5,256.8 948.6,239.8" fill="rgb(54, 23, 41)" stroke="rgb(54, 23, 41)" stroke-width="1"/><polygon points="1004.6,218.1 1043.5,235.1 1026.4,273.8 987.5,256.8" fill="rgb(54, 23, 41)" stroke="rgb(54, 23, 41)" stroke-width="1"/><polygon points="676.4,120.9 715.3,137.9 698.2,176.6 659.3,159.7" fill="rgb(54, 24, 35)" stroke="rgb(54, 24, 35)" stroke-width="1"/><polygon points="715.3,137.9 754.2,154.9 737.1,193.6 698.2,176.6" fill="rgb(54, 24, 35)" stroke="rgb(54, 24, 35)" stroke-width="1"/><polygon points="754.2,154.9 793.1,171.9 776.0,210.6 737.1,193.6" fill="rgb(40, 34, 47)" stroke="rgb(40, 34, 47)" stroke-width="1"/><polygon points="793.1,171.9 832.0,188.9 814.9,227.6 776.0,210.6" fill="rgb(66, 28, 39)" stroke="rgb(66, 28, 39)" stroke-width="1"/><polygon points="832.0,188.9 870.8,205.9 853.7,244.6 814.9,227.6" fill="rgb(28, 66, 202)" stroke="rgb(28, 66, 202)" stroke-width="1"/><polygon points="870.8,205.9 909.7,222.9 892.6,261.6 853.7,244.6" fill="rgb(170, 170, 56)" stroke="rgb(170, 170, 56)" stroke-width="1"/><polygon points="909.7,222.9 948.6,239.8 931.5,278.6 892.6,261.6" fill="rgb(79, 32, 38)" stroke="rgb(79, 32, 38)" stroke-width="1"/><polygon points="948.6,239.8 987.5,256.8 970.4,295.5 931.5,278.6" fill="rgb(64, 26, 64)" stroke="rgb(64, 26, 64)" stroke-width="1"/><polygon points="987.5,256.8 1026.4,273.8 1009.3,312.5 970.4,295.5" fill="rgb(64, 26, 64)" stroke="rgb(64, 26, 64)" stroke-width="1"/><polygon points="659.3,159.7 698.2,176.6 681.1,215.3 642.2,198.4" fill="rgb(56, 25, 20)" stroke="rgb(56, 25, 20)" stroke-width="1"/><polygon points="698.2,176.6 737.1,193.6 720.0,232.3 681.1,215.3" fill="rgb(56, 25, 20)" stroke="rgb(56, 25, 20)" stroke-width="1"/><polygon points="737.1,193.6 776.0,210.6 758.9,249.3 720.0,232.3" fill="rgb(53, 28, 40)" stroke="rgb(53, 28, 40)" stroke-width="1"/><polygon points="776.0,210.6 814.9,227.6 797.8,266.3 758.9,249.3" fill="rgb(46, 46, 104)" stroke="rgb(46, 46, 104)" stroke-width="1"/><polygon points="814.9,227.6 853.7,244.6 836.6,283.3 797.8,266.3" fill="rgb(185, 185, 67)" stroke="rgb(185, 185, 67)" stroke-width="1"/><polygon points="853.7,244.6 892.6,261.6 875.5,300.3 836.6,283.3" fill="rgb(172, 172, 44)" stroke="rgb(172, 172, 44)" stroke-width="1"/><polygon points="892.6,261.6 931.5,278.6 914.4,317.3 875.5,300.3" fill="rgb(64, 32, 51)" stroke="rgb(64, 32, 51)" stroke-width="1"/><polygon points="931.5,278.6 970.4,295.5 953.3,334.2 914.4,317.3" fill="rgb(66, 28, 39)" stroke="rgb(66, 28, 39)" stroke-width="1"/><polygon points="970.4,295.5 1009.3,312.5 992.2,351.2 953.3,334.2" fill="rgb(66, 28, 39)" stroke="rgb(66, 28, 39)" stroke-width="1"/><polygon points="642.2,198.4 681.1,215.3 664.0,254.1 625.1,237.1" fill="rgb(43, 31, 25)" stroke="rgb(43, 31, 25)" stroke-width="1"/><polygon points="681.1,215.3 720.0,232.3 702.9,271.0 664.0,254.1" fill="rgb(43, 31, 25)" stroke="rgb(43, 31, 25)" stroke-width="1"/><polygon points="720.0,232.3 758.9,249.3 741.8,288.0 702.9,271.0" fill="rgb(40, 40, 40)" stroke="rgb(40, 40, 40)" stroke-width="1"/><polygon points="758.9,249.3 797.8,266.3 780.7,305.0 741.8,288.0" fill="rgb(92, 125, 92)" stroke="rgb(92, 125, 92)" stroke-width="1"/><polygon points="797.8,266.3 836.6,283.3 819.5,322.0 780.7,305.0" fill="rgb(185, 166, 82)" stroke="rgb(185, 166, 82)" stroke-width="1"/><polygon points="836.6,283.3 875.5,300.3 858.4,339.0 819.5,322.0" fill="rgb(152, 101, 134)" stroke="rgb(152, 101, 134)" stroke-width="1"/><polygon points="875.5,300.3 914.4,317.3 897.3,356.0 858.4,339.0" fill="rgb(79, 32, 32)" stroke="rgb(79, 32, 32)" stroke-width="1"/><polygon points="914.4,317.3 953.3,334.2 936.2,373.0 897.3,356.0" fill="rgb(66, 39, 28)" stroke="rgb(66, 39, 28)" stroke-width="1"/><polygon points="953.3,334.2 992.2,351.2 975.1,389.9 936.2,373.0" fill="rgb(66, 39, 28)" stroke="rgb(66, 39, 28)" stroke-width="1"/><polygon points="625.1,237.1 664.0,254.1 646.9,292.8 608.0,275.8" fill="rgb(78, 37, 37)" stroke="rgb(78, 37, 37)" stroke-width="1"/><polygon points="664.0,254.1 702.9,271.0 685.8,309.8 646.9,292.8" fill="rgb(78, 37, 37)" stroke="rgb(78, 37, 37)" stroke-width="1"/><polygon points="702.9,271.0 741.8,288.0 724.7,326.7 685.8,309.8" fill="rgb(45, 146, 182)" stroke="rgb(45, 146, 182)" stroke-width="1"/><polygon points="741.8,288.0 780.7,305.0 763.6,343.7 724.7,326.7" fill="rgb(244, 53, 67)" stroke="rgb(244, 53, 67)" stroke-width="1"/><polygon points="780.7,305.0 819.5,322.0 802.4,360.7 763.6,343.7" fill="rgb(210, 94, 79)" stroke="rgb(210, 94, 79)" stroke-width="1"/><polygon points="819.5,322.0 858.4,339.0 841.3,377.7 802.4,360.7" fill="rgb(166, 97, 166)" stroke="rgb(166, 97, 166)" stroke-width="1"/><polygon points="858.4,339.0 897.3,356.0 880.2,394.7 841.3,377.7" fill="rgb(65, 51, 27)" stroke="rgb(65, 51, 27)" stroke-width="1"/><polygon points="897.3,356.0 936.2,373.0 919.1,411.7 880.2,394.7" fill="rgb(81, 28, 23)" stroke="rgb(81, 28, 23)" stroke-width="1"/><polygon points="936.2,373.0 975.1,389.9 958.0,428.7 919.1,411.7" fill="rgb(81, 28, 23)" stroke="rgb(81, 28, 23)" stroke-width="1"/><polygon points="608.0,275.8 646.9,292.8 629.8,331.5 590.9,314.5" fill="rgb(48, 124, 159)" stroke="rgb(48, 124, 159)" stroke-width="1"/><polygon points="646.9,292.8 685.8,309.8 668.7,348.5 629.8,331.5" fill="rgb(48, 124, 159)" stroke="rgb(48, 124, 159)" stroke-width="1"/><polygon points="685.8,309.8 724.7,326.7 707.6,365.5 668.7,348.5" fill="rgb(74, 156, 121)" stroke="rgb(74, 156, 121)" stroke-width="1"/><polygon points="724.7,326.7 763.6,343.7 746.5,382.4 707.6,365.5" fill="rgb(255, 59, 46)" stroke="rgb(255, 59, 46)" stroke-width="1"/><polygon points="763.6,343.7 802.4,360.7 785.3,399.4 746.5,382.4" fill="rgb(175, 74, 104)" stroke="rgb(175, 74, 104)" stroke-width="1"/><polygon points="802.4,360.7 841.3,377.7 824.2,416.4 785.3,399.4" fill="rgb(19, 69, 169)" stroke="rgb(19, 69, 169)" stroke-width="1"/><polygon points="841.3,377.7 880.2,394.7 863.1,433.4 824.2,416.4" fill="rgb(39, 65, 33)" stroke="rgb(39, 65, 33)" stroke-width="1"/><polygon points="880.2,394.7 919.1,411.7 902.0,450.4 863.1,433.4" fill="rgb(32, 79, 32)" stroke="rgb(32, 79, 32)" stroke-width="1"/><polygon points="919.1,411.7 958.0,428.7 940.9,467.4 902.0,450.4" fill="rgb(32, 79, 32)" stroke="rgb(32, 79, 32)" stroke-width="1"/><polygon points="590.9,314.5 629.8,331.5 612.7,370.2 573.8,353.2" fill="rgb(67, 29, 23)" stroke="rgb(67, 29, 23)" stroke-width="1"/><polygon points="629.8,331.5 668.7,348.5 651.6,387.2 612.7,370.2" fill="rgb(67, 29, 23)" stroke="rgb(67, 29, 23)" stroke-width="1"/><polygon points="668.7,348.5 707.6,365.5 690.5,404.2 651.6,387.2" fill="rgb(55, 30, 24)" stroke="rgb(55, 30, 24)" stroke-width="1"/><polygon points="707.6,365.5 746.5,382.4 729.4,421.2 690.5,404.2" fill="rgb(201, 79, 27)" stroke="rgb(201, 79, 27)" stroke-width="1"/><polygon points="746.5,382.4 785.3,399.4 768.2,438.1 729.4,421.2" fill="rgb(67, 34, 23)" stroke="rgb(67, 34, 23)" stroke-width="1"/><polygon points="785.3,399.4 824.2,416.4 807.1,455.1 768.2,438.1" fill="rgb(38, 51, 51)" stroke="rgb(38, 51, 51)" stroke-width="1"/><polygon points="824.2,416.4 863.1,433.4 846.0,472.1 807.1,455.1" fill="rgb(39, 65, 33)" stroke="rgb(39, 65, 33)" stroke-width="1"/><polygon points="863.1,433.4 902.0,450.4 884.9,489.1 846.0,472.1" fill="rgb(67, 34, 23)" stroke="rgb(67, 34, 23)" stroke-width="1"/><polygon points="902.0,450.4 940.9,467.4 923.8,506.1 884.9,489.1" fill="rgb(67, 34, 23)" stroke="rgb(67, 34, 23)" stroke-width="1"/><polygon points="573.8,353.2 612.7,370.2 595.6,408.9 556.7,391.9" fill="rgb(67, 29, 23)" stroke="rgb(67, 29, 23)" stroke-width="1"/><polygon points="612.7,370.2 651.6,387.2 634.5,425.9 595.6,408.9" fill="rgb(67, 29, 23)" stroke="rgb(67, 29, 23)" stroke-width="1"/><polygon points="651.6,387.2 690.5,404.2 673.4,442.9 634.5,425.9" fill="rgb(55, 30, 24)" stroke="rgb(55, 30, 24)" stroke-width="1"/><polygon points="690.5,404.2 729.4,421.2 712.3,459.9 673.4,442.9" fill="rgb(201, 79, 27)" stroke="rgb(201, 79, 27)" stroke-width="1"/><polygon points="729.4,421.2 768.2,438.1 751.1,476.9 712.3,459.9" fill="rgb(67, 34, 23)" stroke="rgb(67, 34, 23)" stroke-width="1"/><polygon points="768.2,438.1 807.1,455.1 790.0,493.8 751.1,476.9" fill="rgb(38, 51, 51)" stroke="rgb(38, 51, 51)" stroke-width="1"/><polygon points="807.1,455.1 846.0,472.1 828.9,510.8 790.0,493.8" fill="rgb(39, 65, 33)" stroke="rgb(39, 65, 33)" stroke-width="1"/><polygon points="846.0,472.1 884.9,489.1 867.8,527.8 828.9,510.8" fill="rgb(67, 34, 23)" stroke="rgb(67, 34, 23)" stroke-width="1"/><polygon points="884.9,489.1 923.8,506.1 906.7,544.8 867.8,527.8" fill="rgb(67, 34, 23)" stroke="rgb(67, 34, 23)" stroke-width="1"/></g></g><g filter="url(#tw2)"><g filter="url(#fb2)"><path d="M909.1 162.9 C924.0 168.6 922.8 197.2 914.5 222.8 C903.8 264.5 874.7 339.8 838.4 376.8 C820.5 390.7 804.3 400.4 775.9 399.9 L710.2 391.4 C692.1 380.7 691.1 347.0 704.5 332.5 C712.6 309.8 729.9 277.8 777.9 243.2 C805.9 224.7 844.4 196.1 909.1 164.9 Z" fill="rgb(175, 150, 105)"/><ellipse cx="858" cy="238" rx="62" ry="28" transform="rotate(-47 858 238)" fill="rgb(160, 170, 70)"/><ellipse cx="752" cy="325" rx="38" ry="15" transform="rotate(-60 752 325)" fill="rgb(215, 75, 90)"/><ellipse cx="805" cy="352" rx="30" ry="17" transform="rotate(-50 805 352)" fill="rgb(70, 140, 215)"/><ellipse cx="668" cy="342" rx="40" ry="15" transform="rotate(-40 668 342)" fill="rgb(80, 150, 190)"/><ellipse cx="878" cy="268" rx="18" ry="10" transform="rotate(-50 878 268)" fill="rgb(180, 120, 160)"/></g><g filter="url(#fs2)"><path d="M708 345 Q760 272 842 207 Q880 178 906 166" fill="none" stroke="rgb(40, 80, 210)" stroke-width="6"/><ellipse cx="745" cy="394" rx="24" ry="9" transform="rotate(20 745 394)" fill="rgb(180, 60, 50)"/><circle cx="718" cy="376" r="12" fill="rgb(210, 160, 80)"/><circle cx="935" cy="218" r="8" fill="rgb(210, 120, 140)"/><circle cx="865" cy="139" r="10" fill="rgb(130, 55, 35)"/><circle cx="746" cy="125" r="9" fill="rgb(150, 55, 40)"/><circle cx="892" cy="331" r="14" fill="rgb(80, 35, 25)"/><circle cx="940" cy="310" r="13" fill="rgb(80, 35, 25)"/></g><g filter="url(#fr2)"><circle cx="922" cy="151" r="15.5" fill="rgb(240, 55, 40)"/></g></g></g></g></g></g><path d="M788.4 77.5L651.6 387.2M827.3 94.5L690.5 404.2M866.2 111.5L729.4 421.2M905.0 128.4L768.2 438.1M943.9 145.4L807.1 455.1M982.8 162.4L846.0 472.1M732.4 99.2L1004.6 218.1M715.3 137.9L987.5 256.8M698.2 176.6L970.4 295.5M681.1 215.3L953.3 334.2M664.0 254.1L936.2 373.0M646.9 292.8L919.1 411.7M629.8 331.5L902.0 450.4" stroke="#000" stroke-width="1.1" fill="none"/><polygon points="1003,172.5 1021.7,179.4 1006.5,212 1005,200" fill="#000"/><polygon points="749.5,60.5 1021.7,179.4 884.6,490.0 612.7,370.2" fill="none" stroke="#000" stroke-width="2.4"/></g></svg><div class="clip" style="left:9.5px;top:61.5px;width:477.0px;height:436.0px;"><div class="t" style="left:451.20000000000005px;top:104.5px;font-size:11px;line-height:12px;color:#111;">IL: 4200<br>XL: 5502</div><div class="t" style="left:-7.2000000000000455px;top:294.5px;font-size:11px;line-height:12px;color:#111;width:44px;text-align:right;">IL: 3502</div><div class="t" style="left:291.20000000000005px;top:428.5px;font-size:11px;line-height:12px;color:#111;">IL: 4200</div></div><div class="b" style="left:9px;top:61px;width:1px;height:437px;background:#000;"></div><div class="b" style="left:9px;top:61px;width:478px;height:1.3px;background:#000;"></div><div class="b" style="left:486px;top:61px;width:1.2px;height:437px;background:#000;"></div><div class="b" style="left:9px;top:497px;width:478px;height:1.2px;background:#000;"></div><div class="b" style="left:9.5px;top:105.5px;width:5px;height:1px;background:#000;"></div><div class="b" style="left:9.5px;top:173.4px;width:5px;height:1px;background:#000;"></div><div class="b" style="left:9.5px;top:241.3px;width:5px;height:1px;background:#000;"></div><div class="b" style="left:9.5px;top:309.20000000000005px;width:5px;height:1px;background:#000;"></div><div class="b" style="left:9.5px;top:377.1px;width:5px;height:1px;background:#000;"></div><div class="b" style="left:9.5px;top:445.0px;width:5px;height:1px;background:#000;"></div><div class="b" style="left:60.0px;top:492px;width:1px;height:5px;background:#000;"></div><div class="b" style="left:127.9px;top:492px;width:1px;height:5px;background:#000;"></div><div class="b" style="left:195.8px;top:492px;width:1px;height:5px;background:#000;"></div><div class="b" style="left:263.7px;top:492px;width:1px;height:5px;background:#000;"></div><div class="b" style="left:331.6px;top:492px;width:1px;height:5px;background:#000;"></div><div class="b" style="left:399.5px;top:492px;width:1px;height:5px;background:#000;"></div><div class="b" style="left:467.4px;top:492px;width:1px;height:5px;background:#000;"></div><div class="t lab" style="left:16px;top:98.0px;">7442000</div><div class="t lab" style="left:16px;top:165.9px;">7440000</div><div class="t lab" style="left:16px;top:233.8px;">7438000</div><div class="t lab" style="left:16px;top:301.70000000000005px;">7436000</div><div class="t lab" style="left:16px;top:369.6px;">7434000</div><div class="t lab" style="left:16px;top:437.5px;">7432000</div><div class="t lab" style="left:38.5px;top:476px;width:44px;text-align:center;">596000</div><div class="t lab" style="left:106.4px;top:476px;width:44px;text-align:center;">598000</div><div class="t lab" style="left:174.3px;top:476px;width:44px;text-align:center;">600000</div><div class="t lab" style="left:242.2px;top:476px;width:44px;text-align:center;">602000</div><div class="t lab" style="left:310.1px;top:476px;width:44px;text-align:center;">604000</div><div class="t lab" style="left:378.0px;top:476px;width:44px;text-align:center;">606000</div><div class="t lab" style="left:445.9px;top:476px;width:44px;text-align:center;">608000</div><div class="t" style="left:226px;top:477px;font-size:16px;font-weight:bold;color:#000;background:rgba(255,255,255,0.55);line-height:17px;">X [m]</div><div class="t" style="left:0.5px;top:271.5px;font-size:16px;font-weight:bold;color:#000;line-height:17px;width:40px;text-align:center;transform:rotate(-90deg);">Y [m]</div><svg class="s" style="left:496px;top:87px;" width="11" height="11" viewBox="0 0 11 11"><rect x="0.5" y="0.5" width="10" height="10" fill="#fff" stroke="#000" stroke-width="1.2"/></svg><div class="t" style="left:516px;top:86.5px;font-size:12px;color:#000;letter-spacing:-0.8px;">Link</div><svg class="s" style="left:547.5px;top:87.5px;" width="13" height="13" viewBox="0 0 13 13"><circle cx="6.5" cy="6.5" r="5.4" fill="#fff" stroke="#000" stroke-width="1.8"/><path d="M6.5 1.1 A5.4 5.4 0 0 1 6.5 11.9 Z" fill="#000"/></svg><div class="b" style="left:513px;top:105.5px;width:53px;height:1px;background:#6e6e6e;"></div><div class="b" style="left:494px;top:105px;width:16px;height:16px;background:#ff0000;border:1px solid #000;box-sizing:border-box;"></div><div class="t" style="left:494px;top:106px;width:16px;text-align:center;font-size:12px;font-weight:bold;color:#fff;line-height:14px;">R</div><div class="b" style="left:514px;top:109px;width:51px;height:20px;background:#f5f5f5;border:1px solid #d4d4d4;box-sizing:border-box;"></div><div class="b" style="left:549px;top:110px;width:15px;height:18px;background:#e3e3e3;border-left:1px solid #d4d4d4;box-sizing:border-box;"></div><svg class="s" style="left:553px;top:117.5px;" width="6" height="4" viewBox="0 0 6 4"><path d="M0 0 L5.5 0 L2.75 3 Z" fill="#000"/></svg><div class="t" style="left:519px;top:111px;font-size:12px;color:#1a1a1a;line-height:16px;letter-spacing:-0.2px;">7.81</div><div class="b" style="left:532.5px;top:134.5px;width:32px;height:19px;background:#fff;border:1px solid #d7d7d7;box-sizing:border-box;"></div><div class="t" style="left:536px;top:136.5px;font-size:12px;color:#909090;line-height:15px;">1</div><svg class="s" style="left:522.5px;top:138.0px;" width="6" height="4" viewBox="0 0 6 4"><path d="M0 3.5 L3 0 L6 3.5 Z" fill="#8a8a8a"/></svg><svg class="s" style="left:522.5px;top:147.5px;" width="6" height="4" viewBox="0 0 6 4"><path d="M0 0 L6 0 L3 3.5 Z" fill="#8a8a8a"/></svg><div class="t" style="left:498px;top:134.0px;font-size:16px;color:#808080;line-height:19px;">k</div><div class="b" style="left:532.5px;top:158.5px;width:32px;height:19px;background:#fff;border:1px solid #d7d7d7;box-sizing:border-box;"></div><div class="t" style="left:536px;top:160.5px;font-size:12px;color:#1a1a1a;line-height:15px;">1</div><svg class="s" style="left:522.5px;top:162.0px;" width="6" height="4" viewBox="0 0 6 4"><path d="M0 3.5 L3 0 L6 3.5 Z" fill="#000"/></svg><svg class="s" style="left:522.5px;top:171.5px;" width="6" height="4" viewBox="0 0 6 4"><path d="M0 0 L6 0 L3 3.5 Z" fill="#000"/></svg><svg class="s" style="left:494.5px;top:159.7px;" width="17" height="17" viewBox="0 0 17 17"><circle cx="8.5" cy="8.5" r="6.9" fill="#fff" stroke="#000" stroke-width="1.9"/><path d="M8.5 1.6 A6.9 6.9 0 0 1 8.5 15.4 Z" fill="#000"/></svg><div class="b" style="left:532.5px;top:182.5px;width:32px;height:19px;background:#fff;border:1px solid #d7d7d7;box-sizing:border-box;"></div><div class="t" style="left:536px;top:184.5px;font-size:12px;color:#1a1a1a;line-height:15px;">1</div><svg class="s" style="left:522.5px;top:186.0px;" width="6" height="4" viewBox="0 0 6 4"><path d="M0 3.5 L3 0 L6 3.5 Z" fill="#000"/></svg><svg class="s" style="left:522.5px;top:195.5px;" width="6" height="4" viewBox="0 0 6 4"><path d="M0 0 L6 0 L3 3.5 Z" fill="#000"/></svg><svg class="s" style="left:495px;top:184.0px;" width="16" height="16" viewBox="0 0 16 16"><g stroke="#000" fill="none" stroke-width="1.2">
<path d="M8 1.5 V13 M2 4 H14"/>
<path d="M3 4 L0.5 9 M3 4 L5.5 9 M13 4 L10.5 9 M13 4 L15.5 9"/>
</g>
<path d="M0.3 9 H5.7 A2.7 2.2 0 0 1 0.3 9 Z M10.3 9 H15.7 A2.7 2.2 0 0 1 10.3 9 Z" fill="#000"/>
<rect x="4.5" y="13" width="7" height="2.5" fill="#000"/><circle cx="8" cy="1.6" r="1.4" fill="#000"/></svg><div class="b" style="left:513px;top:208.5px;width:53px;height:1px;background:#6e6e6e;"></div><div class="b" style="left:494px;top:208px;width:16px;height:16px;background:#00e000;border:1px solid #000;box-sizing:border-box;"></div><div class="t" style="left:494px;top:209px;width:16px;text-align:center;font-size:12px;font-weight:bold;color:#fff;line-height:14px;">G</div><div class="b" style="left:514px;top:212px;width:51px;height:20px;background:#f5f5f5;border:1px solid #d4d4d4;box-sizing:border-box;"></div><div class="b" style="left:549px;top:213px;width:15px;height:18px;background:#e3e3e3;border-left:1px solid #d4d4d4;box-sizing:border-box;"></div><svg class="s" style="left:553px;top:220.5px;" width="6" height="4" viewBox="0 0 6 4"><path d="M0 0 L5.5 0 L2.75 3 Z" fill="#000"/></svg><div class="t" style="left:519px;top:214px;font-size:12px;color:#1a1a1a;line-height:16px;letter-spacing:-0.2px;">15.62</div><div class="b" style="left:532.5px;top:237.5px;width:32px;height:19px;background:#fff;border:1px solid #d7d7d7;box-sizing:border-box;"></div><div class="t" style="left:536px;top:239.5px;font-size:12px;color:#909090;line-height:15px;">1</div><svg class="s" style="left:522.5px;top:241.0px;" width="6" height="4" viewBox="0 0 6 4"><path d="M0 3.5 L3 0 L6 3.5 Z" fill="#8a8a8a"/></svg><svg class="s" style="left:522.5px;top:250.5px;" width="6" height="4" viewBox="0 0 6 4"><path d="M0 0 L6 0 L3 3.5 Z" fill="#8a8a8a"/></svg><div class="t" style="left:498px;top:237.0px;font-size:16px;color:#808080;line-height:19px;">k</div><div class="b" style="left:532.5px;top:261.5px;width:32px;height:19px;background:#fff;border:1px solid #d7d7d7;box-sizing:border-box;"></div><div class="t" style="left:536px;top:263.5px;font-size:12px;color:#1a1a1a;line-height:15px;">1</div><svg class="s" style="left:522.5px;top:265.0px;" width="6" height="4" viewBox="0 0 6 4"><path d="M0 3.5 L3 0 L6 3.5 Z" fill="#000"/></svg><svg class="s" style="left:522.5px;top:274.5px;" width="6" height="4" viewBox="0 0 6 4"><path d="M0 0 L6 0 L3 3.5 Z" fill="#000"/></svg><svg class="s" style="left:494.5px;top:262.7px;" width="17" height="17" viewBox="0 0 17 17"><circle cx="8.5" cy="8.5" r="6.9" fill="#fff" stroke="#000" stroke-width="1.9"/><path d="M8.5 1.6 A6.9 6.9 0 0 1 8.5 15.4 Z" fill="#000"/></svg><div class="b" style="left:532.5px;top:285.5px;width:32px;height:19px;background:#fff;border:1px solid #d7d7d7;box-sizing:border-box;"></div><div class="t" style="left:536px;top:287.5px;font-size:12px;color:#1a1a1a;line-height:15px;">1</div><svg class="s" style="left:522.5px;top:289.0px;" width="6" height="4" viewBox="0 0 6 4"><path d="M0 3.5 L3 0 L6 3.5 Z" fill="#000"/></svg><svg class="s" style="left:522.5px;top:298.5px;" width="6" height="4" viewBox="0 0 6 4"><path d="M0 0 L6 0 L3 3.5 Z" fill="#000"/></svg><svg class="s" style="left:495px;top:287.0px;" width="16" height="16" viewBox="0 0 16 16"><g stroke="#000" fill="none" stroke-width="1.2">
<path d="M8 1.5 V13 M2 4 H14"/>
<path d="M3 4 L0.5 9 M3 4 L5.5 9 M13 4 L10.5 9 M13 4 L15.5 9"/>
</g>
<path d="M0.3 9 H5.7 A2.7 2.2 0 0 1 0.3 9 Z M10.3 9 H15.7 A2.7 2.2 0 0 1 10.3 9 Z" fill="#000"/>
<rect x="4.5" y="13" width="7" height="2.5" fill="#000"/><circle cx="8" cy="1.6" r="1.4" fill="#000"/></svg><div class="b" style="left:513px;top:311.5px;width:53px;height:1px;background:#6e6e6e;"></div><div class="b" style="left:494px;top:311px;width:16px;height:16px;background:#0000ff;border:1px solid #000;box-sizing:border-box;"></div><div class="t" style="left:494px;top:312px;width:16px;text-align:center;font-size:12px;font-weight:bold;color:#fff;line-height:14px;">B</div><div class="b" style="left:514px;top:315px;width:51px;height:20px;background:#f5f5f5;border:1px solid #d4d4d4;box-sizing:border-box;"></div><div class="b" style="left:549px;top:316px;width:15px;height:18px;background:#e3e3e3;border-left:1px solid #d4d4d4;box-sizing:border-box;"></div><svg class="s" style="left:553px;top:323.5px;" width="6" height="4" viewBox="0 0 6 4"><path d="M0 0 L5.5 0 L2.75 3 Z" fill="#000"/></svg><div class="t" style="left:519px;top:317px;font-size:12px;color:#1a1a1a;line-height:16px;letter-spacing:-0.2px;">31.25</div><div class="b" style="left:532.5px;top:340.5px;width:32px;height:19px;background:#fff;border:1px solid #d7d7d7;box-sizing:border-box;"></div><div class="t" style="left:536px;top:342.5px;font-size:12px;color:#909090;line-height:15px;">1</div><svg class="s" style="left:522.5px;top:344.0px;" width="6" height="4" viewBox="0 0 6 4"><path d="M0 3.5 L3 0 L6 3.5 Z" fill="#8a8a8a"/></svg><svg class="s" style="left:522.5px;top:353.5px;" width="6" height="4" viewBox="0 0 6 4"><path d="M0 0 L6 0 L3 3.5 Z" fill="#8a8a8a"/></svg><div class="t" style="left:498px;top:340.0px;font-size:16px;color:#808080;line-height:19px;">k</div><div class="b" style="left:532.5px;top:364.5px;width:32px;height:19px;background:#fff;border:1px solid #d7d7d7;box-sizing:border-box;"></div><div class="t" style="left:536px;top:366.5px;font-size:12px;color:#1a1a1a;line-height:15px;">1</div><svg class="s" style="left:522.5px;top:368.0px;" width="6" height="4" viewBox="0 0 6 4"><path d="M0 3.5 L3 0 L6 3.5 Z" fill="#000"/></svg><svg class="s" style="left:522.5px;top:377.5px;" width="6" height="4" viewBox="0 0 6 4"><path d="M0 0 L6 0 L3 3.5 Z" fill="#000"/></svg><svg class="s" style="left:494.5px;top:365.7px;" width="17" height="17" viewBox="0 0 17 17"><circle cx="8.5" cy="8.5" r="6.9" fill="#fff" stroke="#000" stroke-width="1.9"/><path d="M8.5 1.6 A6.9 6.9 0 0 1 8.5 15.4 Z" fill="#000"/></svg><div class="b" style="left:532.5px;top:388.5px;width:32px;height:19px;background:#fff;border:1px solid #d7d7d7;box-sizing:border-box;"></div><div class="t" style="left:536px;top:390.5px;font-size:12px;color:#1a1a1a;line-height:15px;">1</div><svg class="s" style="left:522.5px;top:392.0px;" width="6" height="4" viewBox="0 0 6 4"><path d="M0 3.5 L3 0 L6 3.5 Z" fill="#000"/></svg><svg class="s" style="left:522.5px;top:401.5px;" width="6" height="4" viewBox="0 0 6 4"><path d="M0 0 L6 0 L3 3.5 Z" fill="#000"/></svg><svg class="s" style="left:495px;top:390.0px;" width="16" height="16" viewBox="0 0 16 16"><g stroke="#000" fill="none" stroke-width="1.2">
<path d="M8 1.5 V13 M2 4 H14"/>
<path d="M3 4 L0.5 9 M3 4 L5.5 9 M13 4 L10.5 9 M13 4 L15.5 9"/>
</g>
<path d="M0.3 9 H5.7 A2.7 2.2 0 0 1 0.3 9 Z M10.3 9 H15.7 A2.7 2.2 0 0 1 10.3 9 Z" fill="#000"/>
<rect x="4.5" y="13" width="7" height="2.5" fill="#000"/><circle cx="8" cy="1.6" r="1.4" fill="#000"/></svg><svg class="s" style="left:337px;top:390px;" width="100" height="60" viewBox="0 0 100 60"><line x1="24.399999999999977" y1="16.399999999999977" x2="78" y2="36" stroke="#f5a800" stroke-width="5" stroke-linecap="round"/><circle cx="24.399999999999977" cy="16.399999999999977" r="5" fill="#f5a800"/></svg><div class="b" style="left:408.3px;top:417.3px;width:142.9000000000001px;height:68.69999999999999px;border:5.5px solid #f5a800;border-radius:6px;box-sizing:border-box;background:#fff;box-shadow:2px 2px 3px rgba(0,0,0,0.25);"></div><div class="t" style="left:405.8px;top:430.3px;width:142.9000000000001px;text-align:center;font-size:18.9px;line-height:21px;color:#111;">Far partial<br>angle stack</div></div>
<svg class="s" style="left:85px;top:295px;" width="14" height="22" viewBox="0 0 14 22"><path d="M0.5 0.5 L0.5 16.5 L4.3 12.9 L7 19.2 L9.6 18.1 L6.9 11.9 L12 11.9 Z" fill="#fff" stroke="#000" stroke-width="1" stroke-linejoin="miter"/></svg>
</body></html>
